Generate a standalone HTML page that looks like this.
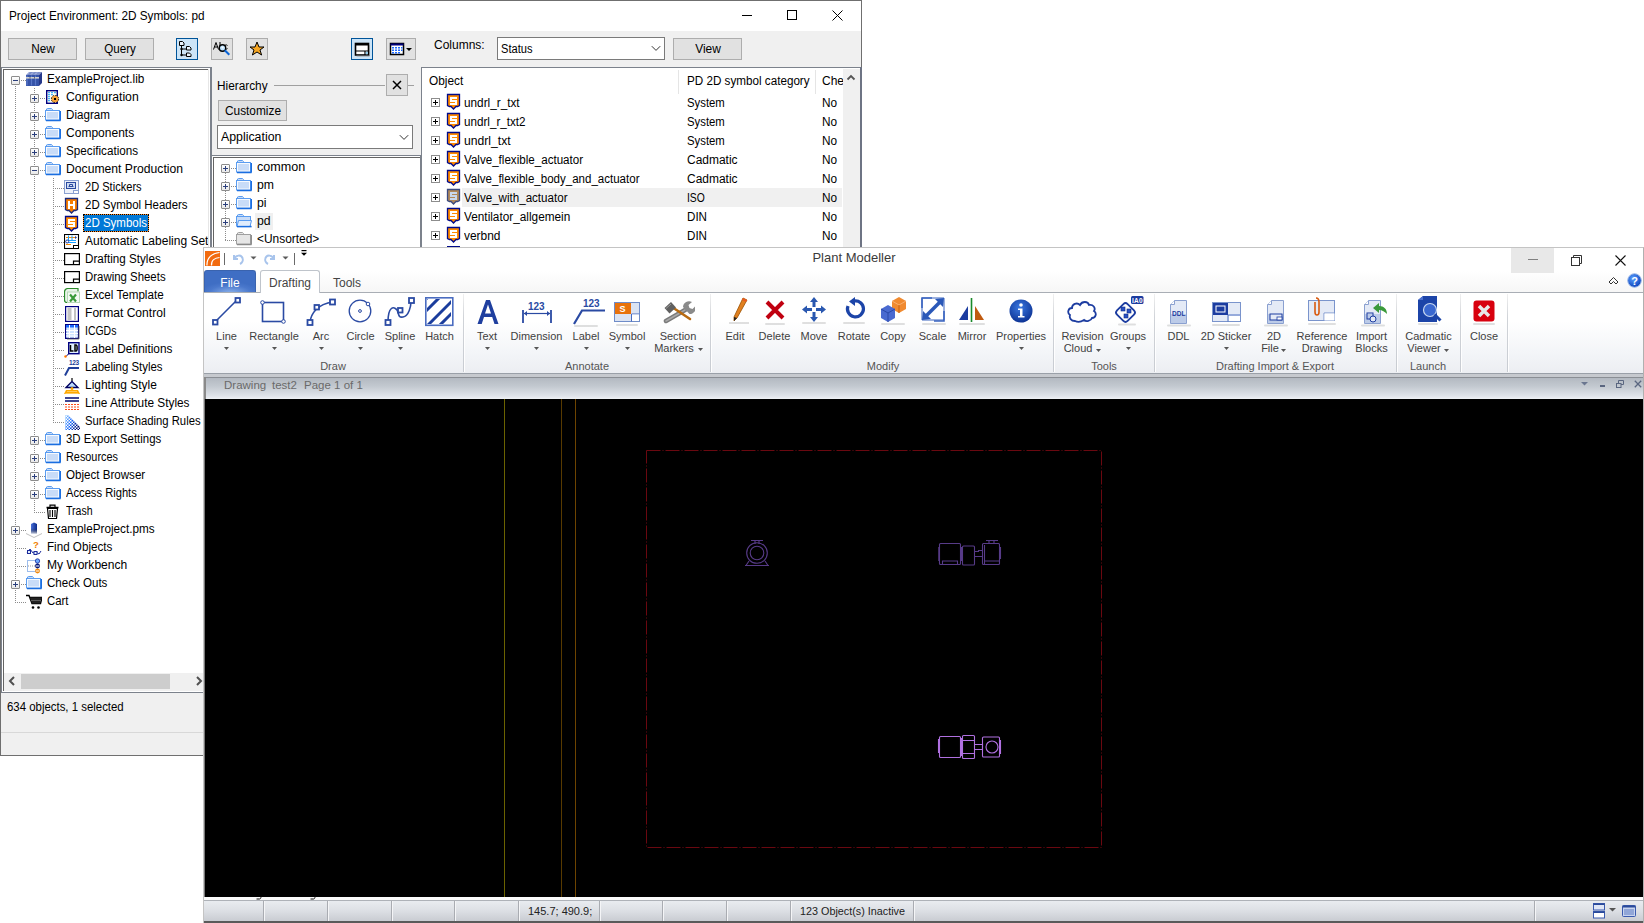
<!DOCTYPE html><html><head><meta charset="utf-8"><style>
html,body{margin:0;padding:0;width:1644px;height:923px;overflow:hidden;background:#fff;font-family:"Liberation Sans", sans-serif;}
.b{position:absolute;box-sizing:border-box;}
.t{position:absolute;white-space:pre;}
</style></head><body>
<div class="b" style="left:0px;top:0px;width:862px;height:756px;background:#f0f0f0;border:1px solid #6f6f6f;"></div>
<div class="b" style="left:1px;top:1px;width:860px;height:30px;background:#fff;"></div>
<div class="t" style="left:9px;top:10px;font-size:12px;line-height:12px;color:#000;transform:scaleX(0.9803);transform-origin:0 0;">Project Environment: 2D Symbols: pd</div>
<div class="b" style="left:742px;top:15px;width:10px;height:1px;background:#000;"></div>
<div class="b" style="left:787px;top:10px;width:10px;height:10px;border:1px solid #000;"></div>
<svg class="b" style="left:832px;top:10px;" width="11" height="11" viewBox="0 0 11 11"><path d="M0.5 0.5L10.5 10.5M10.5 0.5L0.5 10.5" stroke="#000" stroke-width="1"/></svg>
<div class="b" style="left:8px;top:38px;width:69px;height:22px;background:#e1e1e1;border:1px solid #adadad;"></div>
<div class="t" style="left:-107.5px;width:300px;text-align:center;top:43px;font-size:12px;line-height:12px;color:#000;transform:scaleX(0.9831);">New</div>
<div class="b" style="left:85px;top:38px;width:69px;height:22px;background:#e1e1e1;border:1px solid #adadad;"></div>
<div class="t" style="left:-30.5px;width:300px;text-align:center;top:43px;font-size:12px;line-height:12px;color:#000;transform:scaleX(0.9670);">Query</div>
<div class="b" style="left:176px;top:38px;width:22px;height:22px;background:#cce4f7;border:1px solid #005499;"></div>
<div class="b" style="left:211px;top:38px;width:22px;height:22px;background:#e1e1e1;border:1px solid #adadad;"></div>
<div class="b" style="left:246px;top:38px;width:22px;height:22px;background:#e1e1e1;border:1px solid #adadad;"></div>
<div class="b" style="left:351px;top:38px;width:22px;height:22px;background:#cce4f7;border:1px solid #005499;"></div>
<div class="b" style="left:386px;top:38px;width:30px;height:22px;background:#e1e1e1;border:1px solid #adadad;"></div>
<svg class="b" style="left:176px;top:38px;" width="22" height="22" viewBox="0 0 22 22"><g fill="#e8f2fc" stroke="#000" stroke-width="1"><path d="M3.5 3.5h3l1.5 1.5v2.5h-4.5z"/><path d="M10.5 8.5h3l1.5 1.5v2h-4.5z"/><path d="M10.5 15h3l1.5 1.5v2h-4.5z"/></g><path d="M5.5 7.5v10M5.5 11h5M5.5 17h5" stroke="#000" fill="none"/><circle cx="5.5" cy="11" r="1.2" fill="#000"/><circle cx="5.5" cy="17" r="1.2" fill="#000"/></svg>
<svg class="b" style="left:213px;top:41px;" width="18" height="17" viewBox="0 0 18 17"><path d="M0.5 8.5L3 1.5 5.5 8.5M1.5 6h3M7 1v7.5h1.5c1.5 0 1.5-3 0-3H7" fill="none" stroke="#000" stroke-width="1"/><path d="M14.5 4.5c-1-1-3-1-3 1.5s2 2.5 3 1.5" fill="none" stroke="#000"/><circle cx="9.5" cy="7" r="3.2" fill="#bfe4ff" stroke="#000" stroke-width="1.4"/><path d="M11.8 9.3l4.5 4.5" stroke="#0a64d6" stroke-width="2"/><circle cx="9.5" cy="6.5" r="1" fill="#fff"/></svg>
<svg class="b" style="left:249px;top:41px;" width="16" height="16" viewBox="0 0 16 16"><path d="M8 1l2 5h5l-4 3 1.6 5L8 11l-4.6 3L5 9 1 6h5z" fill="#f6a623" stroke="#000" stroke-width="1"/></svg>
<svg class="b" style="left:354px;top:41px;" width="17" height="16" viewBox="0 0 17 16"><rect x="1.5" y="2.5" width="13" height="11.5" fill="#fff" stroke="#000" stroke-width="1.6"/><rect x="1" y="2" width="14" height="2.5" fill="#000"/><path d="M1.5 10h13M11 10v4" stroke="#000" stroke-width="1.2"/><rect x="11.8" y="10.8" width="2" height="2.4" fill="#8ccdf0"/><path d="M15.5 4v11h-13" stroke="#888" stroke-width="0.8" fill="none"/></svg>
<svg class="b" style="left:389px;top:41px;" width="26" height="16" viewBox="0 0 26 16"><rect x="1.5" y="2.5" width="13" height="11" fill="#fff" stroke="#000" stroke-width="1.5"/><rect x="1.5" y="2.5" width="13" height="2" fill="#00007a"/><g fill="#1e6bff"><rect x="3" y="6" width="2" height="1.5"/><rect x="6" y="6" width="2" height="1.5"/><rect x="9" y="6" width="2" height="1.5"/><rect x="12" y="6" width="1.5" height="1.5"/><rect x="3" y="8.5" width="2" height="1.5"/><rect x="6" y="8.5" width="2" height="1.5"/><rect x="9" y="8.5" width="2" height="1.5"/><rect x="12" y="8.5" width="1.5" height="1.5"/><rect x="3" y="11" width="2" height="1.5"/><rect x="6" y="11" width="2" height="1.5"/><rect x="9" y="11" width="2" height="1.5"/></g><path d="M17 7h6l-3 3z" fill="#000"/></svg>
<div class="t" style="left:434px;top:39px;font-size:12px;line-height:12px;color:#000;transform:scaleX(1.0003);transform-origin:0 0;">Columns:</div>
<div class="b" style="left:497px;top:37px;width:168px;height:23px;background:#fff;border:1px solid #7a7a7a;"></div>
<div class="t" style="left:501px;top:43px;font-size:12px;line-height:12px;color:#000;transform:scaleX(0.9259);transform-origin:0 0;">Status</div>
<svg class="b" style="left:651px;top:45px;" width="10" height="7" viewBox="0 0 10 7"><path d="M0.8 1.2l4.2 4.2 4.2-4.2" fill="none" stroke="#333" stroke-width="1"/></svg>
<div class="b" style="left:673px;top:38px;width:69px;height:22px;background:#e1e1e1;border:1px solid #adadad;"></div>
<div class="t" style="left:557.5px;width:300px;text-align:center;top:43px;font-size:12px;line-height:12px;color:#000;transform:scaleX(0.9963);">View</div>
<div class="b" style="left:1px;top:67px;width:211px;height:626px;background:#fff;border:1px solid #7c828c;border-right-width:2px;"></div>
<div class="b" style="left:3px;top:69px;width:206px;height:1px;background:#646464;"></div>
<div class="b" style="left:3px;top:69px;width:1px;height:622px;background:#646464;"></div>
<div class="b" style="left:208px;top:69px;width:1px;height:622px;background:#e6e6e6;"></div>
<div class="b" style="left:15px;top:86px;width:1px;height:515px;background:repeating-linear-gradient(180deg,#8c8c8c 0 1px,transparent 1px 2px);"></div>
<div class="b" style="left:34px;top:88px;width:1px;height:423px;background:repeating-linear-gradient(180deg,#8c8c8c 0 1px,transparent 1px 2px);"></div>
<div class="b" style="left:53px;top:178px;width:1px;height:243px;background:repeating-linear-gradient(180deg,#8c8c8c 0 1px,transparent 1px 2px);"></div>
<div class="b" style="left:21px;top:80px;width:5px;height:1px;background:repeating-linear-gradient(90deg,#8c8c8c 0 1px,transparent 1px 2px);"></div>
<div class="b" style="left:11px;top:76px;width:9px;height:9px;background:linear-gradient(#fff,#e8e8e8);border:1px solid #8d8d8d;border-radius:1px;"></div>
<div class="b" style="left:13px;top:80px;width:5px;height:1px;background:#2b3f7c;"></div>
<svg class="b" style="left:26px;top:71px;" width="16" height="17" viewBox="0 0 16 17"><path d="M0 4l3-3h13l-3 3z" fill="#7d8fc8"/><path d="M13 4l3-3v11l-3 3z" fill="#26398a"/><rect x="0" y="4" width="13" height="11" fill="#3553a8"/><path d="M1 4.5v10M5.5 4.5v10M9.5 4.5v10" stroke="#5a78c8" stroke-width="1.2"/><rect x="0" y="6" width="13" height="1.6" fill="#d0d0d0"/><path d="M4 6v1.6M8.5 6v1.6" stroke="#555" stroke-width="0.8"/><path d="M3 1.5l-2 2M7 1.5l-2 2M11 1.5l-2 2" stroke="#c8d0f0" stroke-width="0.8"/></svg>
<div class="t" style="left:47px;top:73px;font-size:12px;line-height:12px;color:#000;transform:scaleX(0.9791);transform-origin:0 0;">ExampleProject.lib</div>
<div class="b" style="left:40px;top:98px;width:5px;height:1px;background:repeating-linear-gradient(90deg,#8c8c8c 0 1px,transparent 1px 2px);"></div>
<div class="b" style="left:30px;top:94px;width:9px;height:9px;background:linear-gradient(#fff,#e8e8e8);border:1px solid #8d8d8d;border-radius:1px;"></div>
<div class="b" style="left:32px;top:98px;width:5px;height:1px;background:#2b3f7c;"></div>
<div class="b" style="left:34px;top:96px;width:1px;height:5px;background:#2b3f7c;"></div>
<svg class="b" style="left:45px;top:90px;" width="16" height="17" viewBox="0 0 16 17"><rect x="1.7" y="0.7" width="10.6" height="12.6" fill="#fffdf5" stroke="#000080" stroke-width="1.4"/><g fill="#1aa3ff"><rect x="3" y="2.2" width="2" height="1"/><rect x="6" y="2.2" width="2" height="1"/><rect x="9" y="2.2" width="2" height="1"/><rect x="3" y="4.2" width="2" height="1"/><rect x="6" y="4.2" width="2" height="1"/><rect x="3" y="6.2" width="2" height="1"/><rect x="3" y="8.2" width="2" height="1"/><rect x="3" y="10.2" width="2" height="1"/></g><circle cx="10" cy="9" r="3.6" fill="#f7a23b" stroke="#000" stroke-width="0.9" stroke-dasharray="1.6 1.2"/><circle cx="10" cy="9" r="3" fill="#f7a23b"/><rect x="9" y="8" width="2" height="2" fill="#000"/></svg>
<div class="t" style="left:66px;top:91px;font-size:12px;line-height:12px;color:#000;transform:scaleX(1.0185);transform-origin:0 0;">Configuration</div>
<div class="b" style="left:40px;top:116px;width:5px;height:1px;background:repeating-linear-gradient(90deg,#8c8c8c 0 1px,transparent 1px 2px);"></div>
<div class="b" style="left:30px;top:112px;width:9px;height:9px;background:linear-gradient(#fff,#e8e8e8);border:1px solid #8d8d8d;border-radius:1px;"></div>
<div class="b" style="left:32px;top:116px;width:5px;height:1px;background:#2b3f7c;"></div>
<div class="b" style="left:34px;top:114px;width:1px;height:5px;background:#2b3f7c;"></div>
<svg class="b" style="left:45px;top:108px;" width="16" height="17" viewBox="0 0 16 17"><path d="M1.5 2.5V1l1-.5h4l1 1v1" fill="#c8dcf8" stroke="#5a9cf0"/><rect x="0.5" y="2.5" width="14" height="9.5" fill="#c8dcf8" stroke="#5a9cf0"/><rect x="1.5" y="3.5" width="12" height="7.5" fill="none" stroke="#fff" stroke-opacity="0.85"/><path d="M1 12.6h14.6M15.3 3v9.6" stroke="#1a6ee0" stroke-width="1.5"/></svg>
<div class="t" style="left:66px;top:109px;font-size:12px;line-height:12px;color:#000;transform:scaleX(0.9681);transform-origin:0 0;">Diagram</div>
<div class="b" style="left:40px;top:134px;width:5px;height:1px;background:repeating-linear-gradient(90deg,#8c8c8c 0 1px,transparent 1px 2px);"></div>
<div class="b" style="left:30px;top:130px;width:9px;height:9px;background:linear-gradient(#fff,#e8e8e8);border:1px solid #8d8d8d;border-radius:1px;"></div>
<div class="b" style="left:32px;top:134px;width:5px;height:1px;background:#2b3f7c;"></div>
<div class="b" style="left:34px;top:132px;width:1px;height:5px;background:#2b3f7c;"></div>
<svg class="b" style="left:45px;top:126px;" width="16" height="17" viewBox="0 0 16 17"><path d="M1.5 2.5V1l1-.5h4l1 1v1" fill="#c8dcf8" stroke="#5a9cf0"/><rect x="0.5" y="2.5" width="14" height="9.5" fill="#c8dcf8" stroke="#5a9cf0"/><rect x="1.5" y="3.5" width="12" height="7.5" fill="none" stroke="#fff" stroke-opacity="0.85"/><path d="M1 12.6h14.6M15.3 3v9.6" stroke="#1a6ee0" stroke-width="1.5"/></svg>
<div class="t" style="left:66px;top:127px;font-size:12px;line-height:12px;color:#000;transform:scaleX(1.0023);transform-origin:0 0;">Components</div>
<div class="b" style="left:40px;top:152px;width:5px;height:1px;background:repeating-linear-gradient(90deg,#8c8c8c 0 1px,transparent 1px 2px);"></div>
<div class="b" style="left:30px;top:148px;width:9px;height:9px;background:linear-gradient(#fff,#e8e8e8);border:1px solid #8d8d8d;border-radius:1px;"></div>
<div class="b" style="left:32px;top:152px;width:5px;height:1px;background:#2b3f7c;"></div>
<div class="b" style="left:34px;top:150px;width:1px;height:5px;background:#2b3f7c;"></div>
<svg class="b" style="left:45px;top:144px;" width="16" height="17" viewBox="0 0 16 17"><path d="M1.5 2.5V1l1-.5h4l1 1v1" fill="#c8dcf8" stroke="#5a9cf0"/><rect x="0.5" y="2.5" width="14" height="9.5" fill="#c8dcf8" stroke="#5a9cf0"/><rect x="1.5" y="3.5" width="12" height="7.5" fill="none" stroke="#fff" stroke-opacity="0.85"/><path d="M1 12.6h14.6M15.3 3v9.6" stroke="#1a6ee0" stroke-width="1.5"/></svg>
<div class="t" style="left:66px;top:145px;font-size:12px;line-height:12px;color:#000;transform:scaleX(0.9738);transform-origin:0 0;">Specifications</div>
<div class="b" style="left:40px;top:170px;width:5px;height:1px;background:repeating-linear-gradient(90deg,#8c8c8c 0 1px,transparent 1px 2px);"></div>
<div class="b" style="left:30px;top:166px;width:9px;height:9px;background:linear-gradient(#fff,#e8e8e8);border:1px solid #8d8d8d;border-radius:1px;"></div>
<div class="b" style="left:32px;top:170px;width:5px;height:1px;background:#2b3f7c;"></div>
<svg class="b" style="left:45px;top:162px;" width="16" height="17" viewBox="0 0 16 17"><path d="M1.5 2.5V1l1-.5h4l1 1v1" fill="#c8dcf8" stroke="#5a9cf0"/><rect x="0.5" y="2.5" width="14" height="9.5" fill="#c8dcf8" stroke="#5a9cf0"/><rect x="1.5" y="3.5" width="12" height="7.5" fill="none" stroke="#fff" stroke-opacity="0.85"/><path d="M1 12.6h14.6M15.3 3v9.6" stroke="#1a6ee0" stroke-width="1.5"/></svg>
<div class="t" style="left:66px;top:163px;font-size:12px;line-height:12px;color:#000;transform:scaleX(1.0139);transform-origin:0 0;">Document Production</div>
<div class="b" style="left:53px;top:188px;width:11px;height:1px;background:repeating-linear-gradient(90deg,#8c8c8c 0 1px,transparent 1px 2px);"></div>
<svg class="b" style="left:64px;top:180px;" width="16" height="17" viewBox="0 0 16 17"><rect x="0.5" y="0.5" width="14" height="13" fill="#eef2fa" stroke="#8aa0d0"/><rect x="2.5" y="2.5" width="9" height="6" fill="#cfdcf2" stroke="#2a4aa0"/><path d="M4.5 6.5h5M5.5 6.5v-2h3v2" fill="none" stroke="#2a4aa0"/><rect x="9.5" y="10.5" width="5" height="3" fill="#fff" stroke="#8aa0d0"/></svg>
<div class="t" style="left:85px;top:181px;font-size:12px;line-height:12px;color:#000;transform:scaleX(0.9226);transform-origin:0 0;">2D Stickers</div>
<div class="b" style="left:53px;top:206px;width:11px;height:1px;background:repeating-linear-gradient(90deg,#8c8c8c 0 1px,transparent 1px 2px);"></div>
<svg class="b" style="left:64px;top:197px;" width="16" height="17" viewBox="0 0 16 17"><path d="M1.5 1.5H13.5V12.5L11.5 13.5H10L7.5 16L5 13.5H3.5L1.5 12.5Z" fill="#f57c00" stroke="#1b2a7a" stroke-width="1.3"/><path d="M5 4v8M10 4v8M5 8h5" stroke="#fff" stroke-width="2"/></svg>
<div class="t" style="left:85px;top:199px;font-size:12px;line-height:12px;color:#000;transform:scaleX(0.9555);transform-origin:0 0;">2D Symbol Headers</div>
<div class="b" style="left:53px;top:224px;width:11px;height:1px;background:repeating-linear-gradient(90deg,#8c8c8c 0 1px,transparent 1px 2px);"></div>
<svg class="b" style="left:64px;top:215px;" width="16" height="17" viewBox="0 0 16 17"><path d="M1.5 1.5H13.5V12.5L11.5 13.5H10L7.5 16L5 13.5H3.5L1.5 12.5Z" fill="#ff8a00" stroke="#000a8a" stroke-width="1.3"/><rect x="4" y="4" width="7" height="8" fill="#fff"/><path d="M6 6.5h5M4 9.5h5" stroke="#ff8a00" stroke-width="1.2"/></svg>
<div class="b" style="left:83px;top:214px;width:66px;height:18px;background:linear-gradient(#0078d7,#0078d7) padding-box,#ff8c28 border-box;border:1px dotted #000;"></div>
<div class="t" style="left:85px;top:217px;font-size:12px;line-height:12px;color:#fff;transform:scaleX(0.9584);transform-origin:0 0;">2D Symbols</div>
<div class="b" style="left:53px;top:242px;width:11px;height:1px;background:repeating-linear-gradient(90deg,#8c8c8c 0 1px,transparent 1px 2px);"></div>
<svg class="b" style="left:64px;top:234px;" width="16" height="17" viewBox="0 0 16 17"><rect x="0.5" y="0.5" width="14" height="14" fill="#fff" stroke="#000" stroke-width="1.1"/><path d="M2 3.5h10" stroke="#f58a00"/><path d="M11 2l2 1.5-2 1.5z" fill="#1a3aa0"/><path d="M4.5 1.5v5M8 1.5v5" stroke="#1aa0ff"/><path d="M4 6.5h8M4 8.5h8" stroke="#1aa0ff"/><circle cx="3.2" cy="7.5" r="1.5" fill="#fff" stroke="#1a3aa0"/><path d="M2 10.5h5" stroke="#f58a00"/><rect x="9.5" y="11.5" width="5" height="3" fill="#fff" stroke="#000"/></svg>
<div class="t" style="left:85px;top:235px;font-size:12px;line-height:12px;color:#000;">Automatic Labeling Set</div>
<div class="b" style="left:53px;top:260px;width:11px;height:1px;background:repeating-linear-gradient(90deg,#8c8c8c 0 1px,transparent 1px 2px);"></div>
<svg class="b" style="left:64px;top:252px;" width="16" height="17" viewBox="0 0 16 17"><rect x="0.6" y="1.6" width="14.8" height="11" fill="#fff" stroke="#000" stroke-width="1.2"/><path d="M9.5 12.6v-3.5h5.9" fill="none" stroke="#000" stroke-width="1.2"/></svg>
<div class="t" style="left:85px;top:253px;font-size:12px;line-height:12px;color:#000;transform:scaleX(0.9701);transform-origin:0 0;">Drafting Styles</div>
<div class="b" style="left:53px;top:278px;width:11px;height:1px;background:repeating-linear-gradient(90deg,#8c8c8c 0 1px,transparent 1px 2px);"></div>
<svg class="b" style="left:64px;top:270px;" width="16" height="17" viewBox="0 0 16 17"><rect x="0.6" y="1.6" width="14.8" height="11" fill="#fff" stroke="#000" stroke-width="1.2"/><path d="M9.5 12.6v-3.5h5.9" fill="none" stroke="#000" stroke-width="1.2"/></svg>
<div class="t" style="left:85px;top:271px;font-size:12px;line-height:12px;color:#000;transform:scaleX(0.9515);transform-origin:0 0;">Drawing Sheets</div>
<div class="b" style="left:53px;top:296px;width:11px;height:1px;background:repeating-linear-gradient(90deg,#8c8c8c 0 1px,transparent 1px 2px);"></div>
<svg class="b" style="left:64px;top:288px;" width="16" height="17" viewBox="0 0 16 17"><path d="M3 14.5C1.5 14.5 0.5 13.5 0.5 12V4C0.5 2 2 0.5 4 0.5h10v3" fill="#e8f4e8" stroke="#2a8a2a" stroke-width="1.2"/><rect x="3.5" y="4" width="12" height="10.5" fill="#f4faf4" stroke="#b8d8b8"/><path d="M6 6.5l6 7M12 6.5l-6 7" stroke="#3a9a3a" stroke-width="2.2"/></svg>
<div class="t" style="left:85px;top:289px;font-size:12px;line-height:12px;color:#000;transform:scaleX(0.9685);transform-origin:0 0;">Excel Template</div>
<div class="b" style="left:53px;top:314px;width:11px;height:1px;background:repeating-linear-gradient(90deg,#8c8c8c 0 1px,transparent 1px 2px);"></div>
<svg class="b" style="left:64px;top:306px;" width="16" height="17" viewBox="0 0 16 17"><rect x="1.6" y="0.6" width="12.8" height="14.8" fill="#fff" stroke="#000080" stroke-width="1.2"/><g fill="#888"><rect x="3.5" y="2.5" width="4" height="1"/><rect x="10" y="2.5" width="2" height="1"/><rect x="3.5" y="4.5" width="4" height="1"/><rect x="10" y="4.5" width="2" height="1"/><rect x="3.5" y="6.5" width="4" height="1"/><rect x="10" y="6.5" width="2" height="1"/><rect x="3.5" y="8.5" width="4" height="1"/><rect x="10" y="8.5" width="2" height="1"/><rect x="3.5" y="10.5" width="4" height="1"/><rect x="10" y="10.5" width="2" height="1"/><rect x="3.5" y="12.5" width="4" height="1"/><rect x="10" y="12.5" width="2" height="1"/></g></svg>
<div class="t" style="left:85px;top:307px;font-size:12px;line-height:12px;color:#000;transform:scaleX(1.0072);transform-origin:0 0;">Format Control</div>
<div class="b" style="left:53px;top:332px;width:11px;height:1px;background:repeating-linear-gradient(90deg,#8c8c8c 0 1px,transparent 1px 2px);"></div>
<svg class="b" style="left:64px;top:324px;" width="16" height="17" viewBox="0 0 16 17"><rect x="1.6" y="0.6" width="12.8" height="13.8" fill="#cfe4ff" stroke="#000080" stroke-width="1.2"/><rect x="2" y="1" width="12" height="2.5" fill="#1a6aff"/><path d="M2 6.5h12M2 9.5h12M2 12h12M5.5 1v13M10.5 1v13" stroke="#fff" stroke-width="1"/><path d="M15 2v13H3" fill="none" stroke="#555" stroke-width="0.8"/></svg>
<div class="t" style="left:85px;top:325px;font-size:12px;line-height:12px;color:#000;transform:scaleX(0.8722);transform-origin:0 0;">ICGDs</div>
<div class="b" style="left:53px;top:350px;width:11px;height:1px;background:repeating-linear-gradient(90deg,#8c8c8c 0 1px,transparent 1px 2px);"></div>
<svg class="b" style="left:64px;top:342px;" width="16" height="17" viewBox="0 0 16 17"><rect x="4.7" y="0.7" width="10.3" height="11" fill="#e0f0ff" stroke="#000080" stroke-width="1.4"/><path d="M6.5 3v6h3M11 3v6h1c1.5 0 1.5-6 0-6z" fill="none" stroke="#000" stroke-width="1.5"/><path d="M4.7 11.7L2 14.5" stroke="#000080"/><circle cx="1.5" cy="14.5" r="1.2" fill="#ff7a00"/></svg>
<div class="t" style="left:85px;top:343px;font-size:12px;line-height:12px;color:#000;transform:scaleX(0.9851);transform-origin:0 0;">Label Definitions</div>
<div class="b" style="left:53px;top:368px;width:11px;height:1px;background:repeating-linear-gradient(90deg,#8c8c8c 0 1px,transparent 1px 2px);"></div>
<svg class="b" style="left:64px;top:360px;" width="16" height="17" viewBox="0 0 16 17"><text x="5" y="5.3" font-size="6.5" font-weight="bold" font-family="Liberation Sans" fill="#1f3f9a" textLength="10">123</text><path d="M1 15.5l4-7.5h10" fill="none" stroke="#1f3f9a" stroke-width="2"/></svg>
<div class="t" style="left:85px;top:361px;font-size:12px;line-height:12px;color:#000;transform:scaleX(0.9534);transform-origin:0 0;">Labeling Styles</div>
<div class="b" style="left:53px;top:386px;width:11px;height:1px;background:repeating-linear-gradient(90deg,#8c8c8c 0 1px,transparent 1px 2px);"></div>
<svg class="b" style="left:64px;top:378px;" width="16" height="17" viewBox="0 0 16 17"><path d="M8 0v3" stroke="#000" stroke-width="1.2"/><path d="M2 9.5L8 3.5l6 6z" fill="#bcdcff" stroke="#000060" stroke-width="1.3"/><path d="M0 16l2-4h12l2 4z" fill="#ffa800"/><path d="M3 13.5h10M1.5 15.5h13" stroke="#ffd070" stroke-width="0.8"/><circle cx="8" cy="10.5" r="1.5" fill="#ffa800"/></svg>
<div class="t" style="left:85px;top:379px;font-size:12px;line-height:12px;color:#000;transform:scaleX(0.9965);transform-origin:0 0;">Lighting Style</div>
<div class="b" style="left:53px;top:404px;width:11px;height:1px;background:repeating-linear-gradient(90deg,#8c8c8c 0 1px,transparent 1px 2px);"></div>
<svg class="b" style="left:64px;top:396px;" width="16" height="17" viewBox="0 0 16 17"><path d="M1 2h14M1 5h14" stroke="#000a70" stroke-width="1.6"/><path d="M1 8.5h14M1 11h14M1 13.5h14" stroke="#ff4a1a" stroke-width="1.1" stroke-dasharray="2 1"/></svg>
<div class="t" style="left:85px;top:397px;font-size:12px;line-height:12px;color:#000;transform:scaleX(0.9853);transform-origin:0 0;">Line Attribute Styles</div>
<div class="b" style="left:53px;top:422px;width:11px;height:1px;background:repeating-linear-gradient(90deg,#8c8c8c 0 1px,transparent 1px 2px);"></div>
<svg class="b" style="left:64px;top:414px;" width="16" height="17" viewBox="0 0 16 17"><defs><linearGradient id="shg" x1="0" y1="0" x2="1" y2="0.4"><stop offset="0" stop-color="#9ad0ff"/><stop offset="0.5" stop-color="#1a6aff"/><stop offset="1" stop-color="#000a70"/></linearGradient><pattern id="chk" width="3" height="3" patternUnits="userSpaceOnUse"><rect width="1.5" height="1.5" fill="#fff"/><rect x="1.5" y="1.5" width="1.5" height="1.5" fill="#fff"/></pattern></defs><path d="M1 1h3l12 12v3H1z" fill="url(#shg)"/><path d="M1 1h3l12 12v3H1z" fill="url(#chk)"/></svg>
<div class="t" style="left:85px;top:415px;font-size:12px;line-height:12px;color:#000;transform:scaleX(0.9418);transform-origin:0 0;">Surface Shading Rules</div>
<div class="b" style="left:40px;top:440px;width:5px;height:1px;background:repeating-linear-gradient(90deg,#8c8c8c 0 1px,transparent 1px 2px);"></div>
<div class="b" style="left:30px;top:436px;width:9px;height:9px;background:linear-gradient(#fff,#e8e8e8);border:1px solid #8d8d8d;border-radius:1px;"></div>
<div class="b" style="left:32px;top:440px;width:5px;height:1px;background:#2b3f7c;"></div>
<div class="b" style="left:34px;top:438px;width:1px;height:5px;background:#2b3f7c;"></div>
<svg class="b" style="left:45px;top:432px;" width="16" height="17" viewBox="0 0 16 17"><path d="M1.5 2.5V1l1-.5h4l1 1v1" fill="#c8dcf8" stroke="#5a9cf0"/><rect x="0.5" y="2.5" width="14" height="9.5" fill="#c8dcf8" stroke="#5a9cf0"/><rect x="1.5" y="3.5" width="12" height="7.5" fill="none" stroke="#fff" stroke-opacity="0.85"/><path d="M1 12.6h14.6M15.3 3v9.6" stroke="#1a6ee0" stroke-width="1.5"/></svg>
<div class="t" style="left:66px;top:433px;font-size:12px;line-height:12px;color:#000;transform:scaleX(0.9515);transform-origin:0 0;">3D Export Settings</div>
<div class="b" style="left:40px;top:458px;width:5px;height:1px;background:repeating-linear-gradient(90deg,#8c8c8c 0 1px,transparent 1px 2px);"></div>
<div class="b" style="left:30px;top:454px;width:9px;height:9px;background:linear-gradient(#fff,#e8e8e8);border:1px solid #8d8d8d;border-radius:1px;"></div>
<div class="b" style="left:32px;top:458px;width:5px;height:1px;background:#2b3f7c;"></div>
<div class="b" style="left:34px;top:456px;width:1px;height:5px;background:#2b3f7c;"></div>
<svg class="b" style="left:45px;top:450px;" width="16" height="17" viewBox="0 0 16 17"><path d="M1.5 2.5V1l1-.5h4l1 1v1" fill="#c8dcf8" stroke="#5a9cf0"/><rect x="0.5" y="2.5" width="14" height="9.5" fill="#c8dcf8" stroke="#5a9cf0"/><rect x="1.5" y="3.5" width="12" height="7.5" fill="none" stroke="#fff" stroke-opacity="0.85"/><path d="M1 12.6h14.6M15.3 3v9.6" stroke="#1a6ee0" stroke-width="1.5"/></svg>
<div class="t" style="left:66px;top:451px;font-size:12px;line-height:12px;color:#000;transform:scaleX(0.9048);transform-origin:0 0;">Resources</div>
<div class="b" style="left:40px;top:476px;width:5px;height:1px;background:repeating-linear-gradient(90deg,#8c8c8c 0 1px,transparent 1px 2px);"></div>
<div class="b" style="left:30px;top:472px;width:9px;height:9px;background:linear-gradient(#fff,#e8e8e8);border:1px solid #8d8d8d;border-radius:1px;"></div>
<div class="b" style="left:32px;top:476px;width:5px;height:1px;background:#2b3f7c;"></div>
<div class="b" style="left:34px;top:474px;width:1px;height:5px;background:#2b3f7c;"></div>
<svg class="b" style="left:45px;top:468px;" width="16" height="17" viewBox="0 0 16 17"><path d="M1.5 2.5V1l1-.5h4l1 1v1" fill="#c8dcf8" stroke="#5a9cf0"/><rect x="0.5" y="2.5" width="14" height="9.5" fill="#c8dcf8" stroke="#5a9cf0"/><rect x="1.5" y="3.5" width="12" height="7.5" fill="none" stroke="#fff" stroke-opacity="0.85"/><path d="M1 12.6h14.6M15.3 3v9.6" stroke="#1a6ee0" stroke-width="1.5"/></svg>
<div class="t" style="left:66px;top:469px;font-size:12px;line-height:12px;color:#000;transform:scaleX(0.9655);transform-origin:0 0;">Object Browser</div>
<div class="b" style="left:40px;top:494px;width:5px;height:1px;background:repeating-linear-gradient(90deg,#8c8c8c 0 1px,transparent 1px 2px);"></div>
<div class="b" style="left:30px;top:490px;width:9px;height:9px;background:linear-gradient(#fff,#e8e8e8);border:1px solid #8d8d8d;border-radius:1px;"></div>
<div class="b" style="left:32px;top:494px;width:5px;height:1px;background:#2b3f7c;"></div>
<div class="b" style="left:34px;top:492px;width:1px;height:5px;background:#2b3f7c;"></div>
<svg class="b" style="left:45px;top:486px;" width="16" height="17" viewBox="0 0 16 17"><path d="M1.5 2.5V1l1-.5h4l1 1v1" fill="#c8dcf8" stroke="#5a9cf0"/><rect x="0.5" y="2.5" width="14" height="9.5" fill="#c8dcf8" stroke="#5a9cf0"/><rect x="1.5" y="3.5" width="12" height="7.5" fill="none" stroke="#fff" stroke-opacity="0.85"/><path d="M1 12.6h14.6M15.3 3v9.6" stroke="#1a6ee0" stroke-width="1.5"/></svg>
<div class="t" style="left:66px;top:487px;font-size:12px;line-height:12px;color:#000;transform:scaleX(0.9313);transform-origin:0 0;">Access Rights</div>
<div class="b" style="left:34px;top:512px;width:11px;height:1px;background:repeating-linear-gradient(90deg,#8c8c8c 0 1px,transparent 1px 2px);"></div>
<svg class="b" style="left:45px;top:504px;" width="16" height="17" viewBox="0 0 16 17"><path d="M1.5 3.5h12" stroke="#000" stroke-width="1.5"/><path d="M5 3V1.2h5V3" fill="none" stroke="#000" stroke-width="1.2"/><path d="M2.5 4.5h10l-1 10h-8z" fill="#fff" stroke="#000" stroke-width="1.2"/><path d="M5 6v7M7.5 6v7M10 6v7" stroke="#000" stroke-width="1.1"/></svg>
<div class="t" style="left:66px;top:505px;font-size:12px;line-height:12px;color:#000;transform:scaleX(0.8766);transform-origin:0 0;">Trash</div>
<div class="b" style="left:21px;top:530px;width:5px;height:1px;background:repeating-linear-gradient(90deg,#8c8c8c 0 1px,transparent 1px 2px);"></div>
<div class="b" style="left:11px;top:526px;width:9px;height:9px;background:linear-gradient(#fff,#e8e8e8);border:1px solid #8d8d8d;border-radius:1px;"></div>
<div class="b" style="left:13px;top:530px;width:5px;height:1px;background:#2b3f7c;"></div>
<div class="b" style="left:15px;top:528px;width:1px;height:5px;background:#2b3f7c;"></div>
<svg class="b" style="left:26px;top:522px;" width="16" height="17" viewBox="0 0 16 17"><defs><linearGradient id="pg" x1="0" y1="0" x2="1" y2="0"><stop offset="0" stop-color="#4a70d8"/><stop offset="1" stop-color="#0a2a8a"/></linearGradient><linearGradient id="pg2" x1="0" y1="0" x2="0" y2="1"><stop offset="0.5" stop-color="#000" stop-opacity="0"/><stop offset="1" stop-color="#fff" stop-opacity="0.9"/></linearGradient></defs><path d="M5 2l3-1.5 3 1.5v10H5z" fill="url(#pg)"/><path d="M5 2l3-1.5 3 1.5v10H5z" fill="url(#pg2)"/><path d="M0 11.5l8 4 8-4" fill="none" stroke="#c0c0c0"/></svg>
<div class="t" style="left:47px;top:523px;font-size:12px;line-height:12px;color:#000;transform:scaleX(0.9778);transform-origin:0 0;">ExampleProject.pms</div>
<div class="b" style="left:15px;top:548px;width:11px;height:1px;background:repeating-linear-gradient(90deg,#8c8c8c 0 1px,transparent 1px 2px);"></div>
<svg class="b" style="left:26px;top:540px;" width="16" height="17" viewBox="0 0 16 17"><text x="7" y="8" font-size="9.5" font-weight="bold" font-family="Liberation Sans" fill="#f08000">?</text><path d="M1 13l3-4 3 4 3-1 3 2 2-3" fill="none" stroke="#1a2a9a" stroke-width="1"/><rect x="1.5" y="10.5" width="3" height="3" fill="#e0ecff" stroke="#1a2a9a"/><rect x="8" y="11.5" width="3" height="3" fill="#e0ecff" stroke="#1a2a9a"/></svg>
<div class="t" style="left:47px;top:541px;font-size:12px;line-height:12px;color:#000;transform:scaleX(0.9694);transform-origin:0 0;">Find Objects</div>
<div class="b" style="left:15px;top:566px;width:11px;height:1px;background:repeating-linear-gradient(90deg,#8c8c8c 0 1px,transparent 1px 2px);"></div>
<svg class="b" style="left:26px;top:558px;" width="16" height="17" viewBox="0 0 16 17"><rect x="1.5" y="2.5" width="10" height="11" fill="#fff" stroke="#3a7ad8" stroke-dasharray="1 1"/><path d="M2 8h9" stroke="#999" stroke-dasharray="1 1"/><circle cx="11.5" cy="3" r="2.2" fill="#6aa8ff" stroke="#1a2a9a" stroke-width="0.8"/><circle cx="11.5" cy="8" r="2.4" fill="#0a1a7a"/><circle cx="11.5" cy="13" r="2.4" fill="#f08a10"/><path d="M10 8h3M10 13h3" stroke="#fff"/></svg>
<div class="t" style="left:47px;top:559px;font-size:12px;line-height:12px;color:#000;transform:scaleX(1.0062);transform-origin:0 0;">My Workbench</div>
<div class="b" style="left:21px;top:584px;width:5px;height:1px;background:repeating-linear-gradient(90deg,#8c8c8c 0 1px,transparent 1px 2px);"></div>
<div class="b" style="left:11px;top:580px;width:9px;height:9px;background:linear-gradient(#fff,#e8e8e8);border:1px solid #8d8d8d;border-radius:1px;"></div>
<div class="b" style="left:13px;top:584px;width:5px;height:1px;background:#2b3f7c;"></div>
<div class="b" style="left:15px;top:582px;width:1px;height:5px;background:#2b3f7c;"></div>
<svg class="b" style="left:26px;top:576px;" width="16" height="17" viewBox="0 0 16 17"><path d="M1.5 2.5V1l1-.5h4l1 1v1" fill="#c8dcf8" stroke="#5a9cf0"/><rect x="0.5" y="2.5" width="14" height="9.5" fill="#c8dcf8" stroke="#5a9cf0"/><rect x="1.5" y="3.5" width="12" height="7.5" fill="none" stroke="#fff" stroke-opacity="0.85"/><path d="M1 12.6h14.6M15.3 3v9.6" stroke="#1a6ee0" stroke-width="1.5"/></svg>
<div class="t" style="left:47px;top:577px;font-size:12px;line-height:12px;color:#000;transform:scaleX(0.9635);transform-origin:0 0;">Check Outs</div>
<div class="b" style="left:15px;top:602px;width:11px;height:1px;background:repeating-linear-gradient(90deg,#8c8c8c 0 1px,transparent 1px 2px);"></div>
<svg class="b" style="left:26px;top:594px;" width="16" height="17" viewBox="0 0 16 17"><path d="M0 1.5h3l3 8h8.5l1.5-6H4" fill="none" stroke="#000" stroke-width="1.4"/><path d="M4 3.5h12l-2 6H6z" fill="#222"/><path d="M5 6.5h10" stroke="#777" stroke-width="0.7"/><circle cx="7" cy="13.5" r="1.3" fill="#000"/><circle cx="12.5" cy="13.5" r="1.3" fill="#000"/></svg>
<div class="t" style="left:47px;top:595px;font-size:12px;line-height:12px;color:#000;transform:scaleX(0.9484);transform-origin:0 0;">Cart</div>
<div class="b" style="left:209px;top:70px;width:1px;height:180px;background:#fff;"></div>
<div class="b" style="left:208px;top:70px;width:1px;height:180px;background:#e6e6e6;"></div>
<div class="b" style="left:4px;top:673px;width:204px;height:18px;background:#f0f0f0;"></div>
<div class="b" style="left:21px;top:674px;width:149px;height:15px;background:#cdcdcd;"></div>
<svg class="b" style="left:8px;top:676px;" width="8" height="10" viewBox="0 0 8 10"><path d="M6 1L2 5l4 4" fill="none" stroke="#505050" stroke-width="2"/></svg>
<svg class="b" style="left:195px;top:676px;" width="8" height="10" viewBox="0 0 8 10"><path d="M2 1l4 4-4 4" fill="none" stroke="#505050" stroke-width="2"/></svg>
<div class="t" style="left:7px;top:701px;font-size:12px;line-height:12px;color:#000;transform:scaleX(0.9507);transform-origin:0 0;">634 objects, 1 selected</div>
<div class="b" style="left:1px;top:732px;width:860px;height:1px;background:#d8d8d8;"></div>
<div class="t" style="left:217px;top:80px;font-size:12px;line-height:12px;color:#000;transform:scaleX(0.9854);transform-origin:0 0;">Hierarchy</div>
<div class="b" style="left:274px;top:85px;width:111px;height:1px;background:#a0a0a0;"></div>
<div class="b" style="left:408px;top:85px;width:6px;height:1px;background:#a0a0a0;"></div>
<div class="b" style="left:386px;top:74px;width:22px;height:22px;background:#e1e1e1;border:1px solid #adadad;"></div>
<svg class="b" style="left:392px;top:80px;" width="10" height="10" viewBox="0 0 10 10"><path d="M1 1l8 8M9 1l-8 8" stroke="#000" stroke-width="1.5"/></svg>
<div class="b" style="left:218px;top:100px;width:69px;height:21px;background:#e1e1e1;border:1px solid #adadad;"></div>
<div class="t" style="left:102.5px;width:300px;text-align:center;top:105px;font-size:12px;line-height:12px;color:#000;transform:scaleX(0.9879);">Customize</div>
<div class="b" style="left:217px;top:125px;width:196px;height:24px;background:#fff;border:1px solid #7a7a7a;"></div>
<div class="t" style="left:221px;top:131px;font-size:12px;line-height:12px;color:#000;transform:scaleX(1.0288);transform-origin:0 0;">Application</div>
<svg class="b" style="left:399px;top:134px;" width="10" height="7" viewBox="0 0 10 7"><path d="M0.8 1.2l4.2 4.2 4.2-4.2" fill="none" stroke="#333" stroke-width="1"/></svg>
<div class="b" style="left:211px;top:155px;width:210px;height:100px;background:#fff;border:1px solid #7c828c;border-bottom:none;"></div>
<div class="b" style="left:213px;top:157px;width:207px;height:1px;background:#646464;"></div>
<div class="b" style="left:213px;top:157px;width:1px;height:100px;background:#646464;"></div>
<div class="b" style="left:225px;top:173px;width:1px;height:67px;background:repeating-linear-gradient(180deg,#8c8c8c 0 1px,transparent 1px 2px);"></div>
<div class="b" style="left:231px;top:168px;width:5px;height:1px;background:repeating-linear-gradient(90deg,#8c8c8c 0 1px,transparent 1px 2px);"></div>
<div class="b" style="left:221px;top:164px;width:9px;height:9px;background:linear-gradient(#fff,#e8e8e8);border:1px solid #8d8d8d;border-radius:1px;"></div>
<div class="b" style="left:223px;top:168px;width:5px;height:1px;background:#2b3f7c;"></div>
<div class="b" style="left:225px;top:166px;width:1px;height:5px;background:#2b3f7c;"></div>
<svg class="b" style="left:236px;top:160px;" width="16" height="17" viewBox="0 0 16 17"><path d="M1.5 2.5V1l1-.5h4l1 1v1" fill="#c8dcf8" stroke="#5a9cf0"/><rect x="0.5" y="2.5" width="14" height="9.5" fill="#c8dcf8" stroke="#5a9cf0"/><rect x="1.5" y="3.5" width="12" height="7.5" fill="none" stroke="#fff" stroke-opacity="0.85"/><path d="M1 12.6h14.6M15.3 3v9.6" stroke="#1a6ee0" stroke-width="1.5"/></svg>
<div class="t" style="left:257px;top:161px;font-size:12px;line-height:12px;color:#000;transform:scaleX(1.0475);transform-origin:0 0;">common</div>
<div class="b" style="left:231px;top:186px;width:5px;height:1px;background:repeating-linear-gradient(90deg,#8c8c8c 0 1px,transparent 1px 2px);"></div>
<div class="b" style="left:221px;top:182px;width:9px;height:9px;background:linear-gradient(#fff,#e8e8e8);border:1px solid #8d8d8d;border-radius:1px;"></div>
<div class="b" style="left:223px;top:186px;width:5px;height:1px;background:#2b3f7c;"></div>
<div class="b" style="left:225px;top:184px;width:1px;height:5px;background:#2b3f7c;"></div>
<svg class="b" style="left:236px;top:178px;" width="16" height="17" viewBox="0 0 16 17"><path d="M1.5 2.5V1l1-.5h4l1 1v1" fill="#c8dcf8" stroke="#5a9cf0"/><rect x="0.5" y="2.5" width="14" height="9.5" fill="#c8dcf8" stroke="#5a9cf0"/><rect x="1.5" y="3.5" width="12" height="7.5" fill="none" stroke="#fff" stroke-opacity="0.85"/><path d="M1 12.6h14.6M15.3 3v9.6" stroke="#1a6ee0" stroke-width="1.5"/></svg>
<div class="t" style="left:257px;top:179px;font-size:12px;line-height:12px;color:#000;transform:scaleX(1.0198);transform-origin:0 0;">pm</div>
<div class="b" style="left:231px;top:204px;width:5px;height:1px;background:repeating-linear-gradient(90deg,#8c8c8c 0 1px,transparent 1px 2px);"></div>
<div class="b" style="left:221px;top:200px;width:9px;height:9px;background:linear-gradient(#fff,#e8e8e8);border:1px solid #8d8d8d;border-radius:1px;"></div>
<div class="b" style="left:223px;top:204px;width:5px;height:1px;background:#2b3f7c;"></div>
<div class="b" style="left:225px;top:202px;width:1px;height:5px;background:#2b3f7c;"></div>
<svg class="b" style="left:236px;top:196px;" width="16" height="17" viewBox="0 0 16 17"><path d="M1.5 2.5V1l1-.5h4l1 1v1" fill="#c8dcf8" stroke="#5a9cf0"/><rect x="0.5" y="2.5" width="14" height="9.5" fill="#c8dcf8" stroke="#5a9cf0"/><rect x="1.5" y="3.5" width="12" height="7.5" fill="none" stroke="#fff" stroke-opacity="0.85"/><path d="M1 12.6h14.6M15.3 3v9.6" stroke="#1a6ee0" stroke-width="1.5"/></svg>
<div class="t" style="left:257px;top:197px;font-size:12px;line-height:12px;color:#000;transform:scaleX(1.0171);transform-origin:0 0;">pi</div>
<div class="b" style="left:231px;top:222px;width:5px;height:1px;background:repeating-linear-gradient(90deg,#8c8c8c 0 1px,transparent 1px 2px);"></div>
<div class="b" style="left:221px;top:218px;width:9px;height:9px;background:linear-gradient(#fff,#e8e8e8);border:1px solid #8d8d8d;border-radius:1px;"></div>
<div class="b" style="left:223px;top:222px;width:5px;height:1px;background:#2b3f7c;"></div>
<div class="b" style="left:225px;top:220px;width:1px;height:5px;background:#2b3f7c;"></div>
<svg class="b" style="left:236px;top:214px;" width="16" height="17" viewBox="0 0 16 17"><path d="M1.5 2.5V1l1-.5h4l1 1v1" fill="#c8dcf8" stroke="#5a9cf0"/><rect x="0.5" y="2.5" width="14" height="9.5" fill="#c8dcf8" stroke="#5a9cf0"/><path d="M2.5 6.5h13l-1.5 6h-13z" fill="#e0ecfc" stroke="#5a9cf0"/><path d="M1 12.6h14.6" stroke="#1a6ee0" stroke-width="1.5"/></svg>
<div class="b" style="left:255px;top:213px;width:18px;height:17px;background:#f0f0f0;"></div>
<div class="t" style="left:257px;top:215px;font-size:12px;line-height:12px;color:#000;transform:scaleX(1.0189);transform-origin:0 0;">pd</div>
<div class="b" style="left:225px;top:240px;width:11px;height:1px;background:repeating-linear-gradient(90deg,#8c8c8c 0 1px,transparent 1px 2px);"></div>
<svg class="b" style="left:236px;top:232px;" width="16" height="17" viewBox="0 0 16 17"><path d="M1.5 2.5V1l1-.5h4l1 1v1" fill="#e6e6e6" stroke="#a0a0a0"/><rect x="0.5" y="2.5" width="14" height="9.5" fill="#e6e6e6" stroke="#a0a0a0"/><path d="M1 12.6h14.6M15.3 3v9.6" stroke="#8a8a8a" stroke-width="1.3"/></svg>
<div class="t" style="left:257px;top:233px;font-size:12px;line-height:12px;color:#000;transform:scaleX(0.9935);transform-origin:0 0;">&lt;Unsorted&gt;</div>
<div class="b" style="left:421px;top:67px;width:440px;height:190px;background:#fff;border:1px solid #7c828c;border-right:none;border-bottom:none;"></div>
<div class="t" style="left:429px;top:75px;font-size:12px;line-height:12px;color:#000;transform:scaleX(0.9861);transform-origin:0 0;">Object</div>
<div class="b" style="left:678px;top:70px;width:1px;height:24px;background:#e5e5e5;"></div>
<div class="t" style="left:687px;top:75px;font-size:12px;line-height:12px;color:#000;transform:scaleX(0.9726);transform-origin:0 0;">PD 2D symbol category</div>
<div class="b" style="left:815px;top:70px;width:1px;height:24px;background:#e5e5e5;"></div>
<div class="t" style="left:822px;top:75px;font-size:12px;line-height:12px;color:#000;">Che</div>
<div class="b" style="left:843px;top:69px;width:17px;height:190px;background:#f0f0f0;"></div>
<svg class="b" style="left:846px;top:74px;" width="10" height="7" viewBox="0 0 10 7"><path d="M1.5 5.5l3.5-3.5 3.5 3.5" fill="none" stroke="#555" stroke-width="1.8"/></svg>
<div class="b" style="left:860px;top:67px;width:2px;height:181px;background:#6e7484;"></div>
<div class="b" style="left:447px;top:246px;width:13px;height:1px;background:#000a8a;"></div>
<div class="b" style="left:431px;top:98px;width:9px;height:9px;background:#fff;border:1px solid #8d8d8d;"></div>
<div class="b" style="left:433px;top:102px;width:5px;height:1px;background:#000;"></div>
<div class="b" style="left:435px;top:100px;width:1px;height:5px;background:#000;"></div>
<svg class="b" style="left:446px;top:93px;" width="16" height="17" viewBox="0 0 16 17"><path d="M1.5 1.5H13.5V12.5L11.5 13.5H10L7.5 16L5 13.5H3.5L1.5 12.5Z" fill="#ff8a00" stroke="#000a8a" stroke-width="1.3"/><rect x="4" y="4" width="7" height="8" fill="#fff"/><path d="M6 6.5h5M4 9.5h5" stroke="#ff8a00" stroke-width="1.2"/></svg>
<div class="t" style="left:464px;top:97px;font-size:12px;line-height:12px;color:#000;transform:scaleX(0.9806);transform-origin:0 0;">undrl_r_txt</div>
<div class="t" style="left:687px;top:97px;font-size:12px;line-height:12px;color:#000;transform:scaleX(0.9448);transform-origin:0 0;">System</div>
<div class="t" style="left:822px;top:97px;font-size:12px;line-height:12px;color:#000;transform:scaleX(0.9843);transform-origin:0 0;">No</div>
<div class="b" style="left:431px;top:117px;width:9px;height:9px;background:#fff;border:1px solid #8d8d8d;"></div>
<div class="b" style="left:433px;top:121px;width:5px;height:1px;background:#000;"></div>
<div class="b" style="left:435px;top:119px;width:1px;height:5px;background:#000;"></div>
<svg class="b" style="left:446px;top:112px;" width="16" height="17" viewBox="0 0 16 17"><path d="M1.5 1.5H13.5V12.5L11.5 13.5H10L7.5 16L5 13.5H3.5L1.5 12.5Z" fill="#ff8a00" stroke="#000a8a" stroke-width="1.3"/><rect x="4" y="4" width="7" height="8" fill="#fff"/><path d="M6 6.5h5M4 9.5h5" stroke="#ff8a00" stroke-width="1.2"/></svg>
<div class="t" style="left:464px;top:116px;font-size:12px;line-height:12px;color:#000;transform:scaleX(0.9720);transform-origin:0 0;">undrl_r_txt2</div>
<div class="t" style="left:687px;top:116px;font-size:12px;line-height:12px;color:#000;transform:scaleX(0.9448);transform-origin:0 0;">System</div>
<div class="t" style="left:822px;top:116px;font-size:12px;line-height:12px;color:#000;transform:scaleX(0.9843);transform-origin:0 0;">No</div>
<div class="b" style="left:431px;top:136px;width:9px;height:9px;background:#fff;border:1px solid #8d8d8d;"></div>
<div class="b" style="left:433px;top:140px;width:5px;height:1px;background:#000;"></div>
<div class="b" style="left:435px;top:138px;width:1px;height:5px;background:#000;"></div>
<svg class="b" style="left:446px;top:131px;" width="16" height="17" viewBox="0 0 16 17"><path d="M1.5 1.5H13.5V12.5L11.5 13.5H10L7.5 16L5 13.5H3.5L1.5 12.5Z" fill="#ff8a00" stroke="#000a8a" stroke-width="1.3"/><rect x="4" y="4" width="7" height="8" fill="#fff"/><path d="M6 6.5h5M4 9.5h5" stroke="#ff8a00" stroke-width="1.2"/></svg>
<div class="t" style="left:464px;top:135px;font-size:12px;line-height:12px;color:#000;transform:scaleX(1.0125);transform-origin:0 0;">undrl_txt</div>
<div class="t" style="left:687px;top:135px;font-size:12px;line-height:12px;color:#000;transform:scaleX(0.9448);transform-origin:0 0;">System</div>
<div class="t" style="left:822px;top:135px;font-size:12px;line-height:12px;color:#000;transform:scaleX(0.9843);transform-origin:0 0;">No</div>
<div class="b" style="left:431px;top:155px;width:9px;height:9px;background:#fff;border:1px solid #8d8d8d;"></div>
<div class="b" style="left:433px;top:159px;width:5px;height:1px;background:#000;"></div>
<div class="b" style="left:435px;top:157px;width:1px;height:5px;background:#000;"></div>
<svg class="b" style="left:446px;top:150px;" width="16" height="17" viewBox="0 0 16 17"><path d="M1.5 1.5H13.5V12.5L11.5 13.5H10L7.5 16L5 13.5H3.5L1.5 12.5Z" fill="#ff8a00" stroke="#000a8a" stroke-width="1.3"/><rect x="4" y="4" width="7" height="8" fill="#fff"/><path d="M6 6.5h5M4 9.5h5" stroke="#ff8a00" stroke-width="1.2"/></svg>
<div class="t" style="left:464px;top:154px;font-size:12px;line-height:12px;color:#000;transform:scaleX(0.9668);transform-origin:0 0;">Valve_flexible_actuator</div>
<div class="t" style="left:687px;top:154px;font-size:12px;line-height:12px;color:#000;transform:scaleX(0.9983);transform-origin:0 0;">Cadmatic</div>
<div class="t" style="left:822px;top:154px;font-size:12px;line-height:12px;color:#000;transform:scaleX(0.9843);transform-origin:0 0;">No</div>
<div class="b" style="left:431px;top:174px;width:9px;height:9px;background:#fff;border:1px solid #8d8d8d;"></div>
<div class="b" style="left:433px;top:178px;width:5px;height:1px;background:#000;"></div>
<div class="b" style="left:435px;top:176px;width:1px;height:5px;background:#000;"></div>
<svg class="b" style="left:446px;top:169px;" width="16" height="17" viewBox="0 0 16 17"><path d="M1.5 1.5H13.5V12.5L11.5 13.5H10L7.5 16L5 13.5H3.5L1.5 12.5Z" fill="#ff8a00" stroke="#000a8a" stroke-width="1.3"/><rect x="4" y="4" width="7" height="8" fill="#fff"/><path d="M6 6.5h5M4 9.5h5" stroke="#ff8a00" stroke-width="1.2"/></svg>
<div class="t" style="left:464px;top:173px;font-size:12px;line-height:12px;color:#000;transform:scaleX(0.9612);transform-origin:0 0;">Valve_flexible_body_and_actuator</div>
<div class="t" style="left:687px;top:173px;font-size:12px;line-height:12px;color:#000;transform:scaleX(0.9983);transform-origin:0 0;">Cadmatic</div>
<div class="t" style="left:822px;top:173px;font-size:12px;line-height:12px;color:#000;transform:scaleX(0.9843);transform-origin:0 0;">No</div>
<div class="b" style="left:462px;top:188px;width:380px;height:19px;background:#f0f0f0;"></div>
<div class="b" style="left:431px;top:193px;width:9px;height:9px;background:#fff;border:1px solid #8d8d8d;"></div>
<div class="b" style="left:433px;top:197px;width:5px;height:1px;background:#000;"></div>
<div class="b" style="left:435px;top:195px;width:1px;height:5px;background:#000;"></div>
<svg class="b" style="left:446px;top:188px;" width="16" height="17" viewBox="0 0 16 17"><path d="M1.5 1.5H13.5V12.5L11.5 13.5H10L7.5 16L5 13.5H3.5L1.5 12.5Z" fill="#b0885a" stroke="#3a4a80" stroke-width="1.3"/><rect x="4" y="4" width="7" height="8" fill="#c8d8f0"/><path d="M6 6.5h5M4 9.5h5" stroke="#b0885a" stroke-width="1.2"/></svg>
<div class="t" style="left:464px;top:192px;font-size:12px;line-height:12px;color:#000;transform:scaleX(0.9657);transform-origin:0 0;">Valve_with_actuator</div>
<div class="t" style="left:687px;top:192px;font-size:12px;line-height:12px;color:#000;transform:scaleX(0.8611);transform-origin:0 0;">ISO</div>
<div class="t" style="left:822px;top:192px;font-size:12px;line-height:12px;color:#000;transform:scaleX(0.9843);transform-origin:0 0;">No</div>
<div class="b" style="left:431px;top:212px;width:9px;height:9px;background:#fff;border:1px solid #8d8d8d;"></div>
<div class="b" style="left:433px;top:216px;width:5px;height:1px;background:#000;"></div>
<div class="b" style="left:435px;top:214px;width:1px;height:5px;background:#000;"></div>
<svg class="b" style="left:446px;top:207px;" width="16" height="17" viewBox="0 0 16 17"><path d="M1.5 1.5H13.5V12.5L11.5 13.5H10L7.5 16L5 13.5H3.5L1.5 12.5Z" fill="#ff8a00" stroke="#000a8a" stroke-width="1.3"/><rect x="4" y="4" width="7" height="8" fill="#fff"/><path d="M6 6.5h5M4 9.5h5" stroke="#ff8a00" stroke-width="1.2"/></svg>
<div class="t" style="left:464px;top:211px;font-size:12px;line-height:12px;color:#000;transform:scaleX(0.9836);transform-origin:0 0;">Ventilator_allgemein</div>
<div class="t" style="left:687px;top:211px;font-size:12px;line-height:12px;color:#000;transform:scaleX(0.9678);transform-origin:0 0;">DIN</div>
<div class="t" style="left:822px;top:211px;font-size:12px;line-height:12px;color:#000;transform:scaleX(0.9843);transform-origin:0 0;">No</div>
<div class="b" style="left:431px;top:231px;width:9px;height:9px;background:#fff;border:1px solid #8d8d8d;"></div>
<div class="b" style="left:433px;top:235px;width:5px;height:1px;background:#000;"></div>
<div class="b" style="left:435px;top:233px;width:1px;height:5px;background:#000;"></div>
<svg class="b" style="left:446px;top:226px;" width="16" height="17" viewBox="0 0 16 17"><path d="M1.5 1.5H13.5V12.5L11.5 13.5H10L7.5 16L5 13.5H3.5L1.5 12.5Z" fill="#ff8a00" stroke="#000a8a" stroke-width="1.3"/><rect x="4" y="4" width="7" height="8" fill="#fff"/><path d="M6 6.5h5M4 9.5h5" stroke="#ff8a00" stroke-width="1.2"/></svg>
<div class="t" style="left:464px;top:230px;font-size:12px;line-height:12px;color:#000;transform:scaleX(0.9947);transform-origin:0 0;">verbnd</div>
<div class="t" style="left:687px;top:230px;font-size:12px;line-height:12px;color:#000;transform:scaleX(0.9678);transform-origin:0 0;">DIN</div>
<div class="t" style="left:822px;top:230px;font-size:12px;line-height:12px;color:#000;transform:scaleX(0.9843);transform-origin:0 0;">No</div>
<div class="b" style="left:203px;top:247px;width:1441px;height:676px;background:#fff;border:1px solid #c4c4c4;border-right:1px solid #b0b0b0;"></div>
<div class="b" style="left:204px;top:248px;width:1439px;height:45px;background:linear-gradient(#ffffff 0%,#ffffff 50%,#f6f6f6 100%);"></div>
<svg class="b" style="left:205px;top:251px;" width="15" height="15" viewBox="0 0 15 15"><rect width="15" height="15" fill="#f26b0f"/><path d="M14.5 1.5C7 2 1.5 7 2 14.5" fill="none" stroke="#fff" stroke-width="1.2"/><path d="M14.5 6.5C10 7 6 9.5 6.5 14.5" fill="none" stroke="#fff" stroke-width="1.2"/></svg>
<div class="b" style="left:224px;top:253px;width:1px;height:12px;background:#6a6a6a;"></div>
<svg class="b" style="left:231px;top:252px;" width="14" height="13" viewBox="0 0 14 13"><path d="M3 3v4h4" fill="none" stroke="#a8c4ec" stroke-width="2"/><path d="M3.5 6.5C5 3 10 2.5 11.5 6c1 2.5-0.5 5-2.5 6" fill="none" stroke="#a8c4ec" stroke-width="2"/></svg>
<svg class="b" style="left:250px;top:256px;" width="8" height="5" viewBox="0 0 8 5"><path d="M0.5 0.5h6l-3 3z" fill="#5a5a5a"/></svg>
<svg class="b" style="left:263px;top:252px;" width="14" height="13" viewBox="0 0 14 13"><path d="M11 3v4H7" fill="none" stroke="#a8c4ec" stroke-width="2"/><path d="M10.5 6.5C9 3 4 2.5 2.5 6c-1 2.5 0.5 5 2.5 6" fill="none" stroke="#a8c4ec" stroke-width="2"/></svg>
<svg class="b" style="left:282px;top:256px;" width="8" height="5" viewBox="0 0 8 5"><path d="M0.5 0.5h6l-3 3z" fill="#5a5a5a"/></svg>
<div class="b" style="left:294px;top:253px;width:1px;height:12px;background:#6a6a6a;"></div>
<svg class="b" style="left:301px;top:250px;" width="6" height="7" viewBox="0 0 6 7"><path d="M0.5 0.6h5" stroke="#000" stroke-width="1.2"/><path d="M0 2.8h6l-3 3z" fill="#000"/></svg>
<div class="t" style="left:704px;width:300px;text-align:center;top:251px;font-size:13px;line-height:13px;color:#3b3b3b;">Plant Modeller</div>
<div class="b" style="left:1511px;top:248px;width:43px;height:25px;background:#e8e8e8;"></div>
<div class="b" style="left:1528px;top:259px;width:10px;height:1px;background:#808080;"></div>
<svg class="b" style="left:1571px;top:255px;" width="12" height="11" viewBox="0 0 12 11"><rect x="0.5" y="2.5" width="8" height="8" fill="none" stroke="#333"/><path d="M2.5 2.5v-2h8v8h-2" fill="none" stroke="#333"/></svg>
<svg class="b" style="left:1615px;top:255px;" width="11" height="11" viewBox="0 0 11 11"><path d="M0.5 0.5l10 10M10.5 0.5l-10 10" stroke="#111" stroke-width="1.1"/></svg>
<svg class="b" style="left:1608px;top:276px;" width="11" height="9" viewBox="0 0 11 9"><path d="M1 6l4.5-4.5L10 6 8 8 5.5 5.5 3 8z" fill="none" stroke="#333" stroke-width="1"/></svg>
<svg class="b" style="left:1627px;top:273px;" width="15" height="15" viewBox="0 0 15 15"><defs><radialGradient id="hg" cx="0.4" cy="0.35" r="0.7"><stop offset="0" stop-color="#5aa0ff"/><stop offset="1" stop-color="#0a3fb8"/></radialGradient></defs><circle cx="7.5" cy="7.5" r="6.8" fill="url(#hg)" stroke="#9cb8e8" stroke-width="1"/><text x="4.2" y="11.8" font-size="11" font-weight="bold" font-family="Liberation Sans" fill="#fff">?</text></svg>
<div class="b" style="left:204px;top:270px;width:52px;height:23px;background:radial-gradient(ellipse 60% 50% at 50% 100%,#8ab0ea 0%,#4a78cc 70%,#3f6ec4 100%),linear-gradient(#5a88d8,#3a66bc);border:1px solid #3a63ae;border-bottom:none;border-radius:3px 3px 0 0;"></div>
<div class="t" style="left:80px;width:300px;text-align:center;top:277px;font-size:12px;line-height:12px;color:#fff;">File</div>
<div class="b" style="left:204px;top:292px;width:1439px;height:1px;background:#a9aeb5;"></div>
<div class="b" style="left:260px;top:270px;width:60px;height:23px;background:#fff;border:1px solid #bfc4cb;border-bottom:none;border-radius:3px 3px 0 0;"></div>
<div class="t" style="left:140px;width:300px;text-align:center;top:277px;font-size:12px;line-height:12px;color:#444;">Drafting</div>
<div class="t" style="left:197px;width:300px;text-align:center;top:277px;font-size:12px;line-height:12px;color:#444;">Tools</div>
<div class="b" style="left:204px;top:293px;width:1439px;height:80px;background:linear-gradient(#ffffff 0%,#ffffff 35%,#f3f5f8 75%,#eceef2 100%);"></div>
<div class="b" style="left:204px;top:373px;width:1439px;height:1px;background:#9aa0a8;"></div>
<div class="b" style="left:204px;top:374px;width:1439px;height:3px;background:#c6c9ce;"></div>
<div class="b" style="left:463px;top:294px;width:1px;height:78px;background:linear-gradient(#f0f0f0,#d0d3d8 30%,#c8ccd2 100%);"></div>
<div class="b" style="left:464px;top:294px;width:1px;height:78px;background:rgba(255,255,255,0.9);"></div>
<div class="b" style="left:710px;top:294px;width:1px;height:78px;background:linear-gradient(#f0f0f0,#d0d3d8 30%,#c8ccd2 100%);"></div>
<div class="b" style="left:711px;top:294px;width:1px;height:78px;background:rgba(255,255,255,0.9);"></div>
<div class="b" style="left:1053px;top:294px;width:1px;height:78px;background:linear-gradient(#f0f0f0,#d0d3d8 30%,#c8ccd2 100%);"></div>
<div class="b" style="left:1054px;top:294px;width:1px;height:78px;background:rgba(255,255,255,0.9);"></div>
<div class="b" style="left:1154px;top:294px;width:1px;height:78px;background:linear-gradient(#f0f0f0,#d0d3d8 30%,#c8ccd2 100%);"></div>
<div class="b" style="left:1155px;top:294px;width:1px;height:78px;background:rgba(255,255,255,0.9);"></div>
<div class="b" style="left:1396px;top:294px;width:1px;height:78px;background:linear-gradient(#f0f0f0,#d0d3d8 30%,#c8ccd2 100%);"></div>
<div class="b" style="left:1397px;top:294px;width:1px;height:78px;background:rgba(255,255,255,0.9);"></div>
<div class="b" style="left:1460px;top:294px;width:1px;height:78px;background:linear-gradient(#f0f0f0,#d0d3d8 30%,#c8ccd2 100%);"></div>
<div class="b" style="left:1461px;top:294px;width:1px;height:78px;background:rgba(255,255,255,0.9);"></div>
<div class="b" style="left:1507px;top:294px;width:1px;height:78px;background:linear-gradient(#f0f0f0,#d0d3d8 30%,#c8ccd2 100%);"></div>
<div class="b" style="left:1508px;top:294px;width:1px;height:78px;background:rgba(255,255,255,0.9);"></div>
<svg class="b" style="left:211px;top:296px;" width="32" height="32" viewBox="0 0 32 32"><path d="M4 26L26 4" stroke="#2a4aa3" stroke-width="1.6"/><rect x="2" y="24" width="4.5" height="4.5" fill="#fff" stroke="#2a4aa3" stroke-width="1.8"/><rect x="24.5" y="2" width="4.5" height="4.5" fill="#fff" stroke="#2a4aa3" stroke-width="1.8"/></svg>
<div class="t" style="left:76.5px;width:300px;text-align:center;top:331px;font-size:11px;line-height:11px;color:#3f3f3f;">Line</div>
<svg class="b" style="left:224px;top:347px;" width="5" height="4" viewBox="0 0 5 4"><path d="M0 0h5l-2.5 3z" fill="#555"/></svg>
<svg class="b" style="left:258px;top:297px;" width="30" height="30" viewBox="0 0 30 30"><rect x="4.5" y="5.5" width="21" height="19" fill="none" stroke="#2a4aa3" stroke-width="1.6"/><circle cx="4.5" cy="5.5" r="1.8" fill="#fff" stroke="#2a4aa3"/><circle cx="25.5" cy="24.5" r="1.8" fill="#fff" stroke="#2a4aa3"/></svg>
<div class="t" style="left:124px;width:300px;text-align:center;top:331px;font-size:11px;line-height:11px;color:#3f3f3f;">Rectangle</div>
<svg class="b" style="left:272px;top:347px;" width="5" height="4" viewBox="0 0 5 4"><path d="M0 0h5l-2.5 3z" fill="#555"/></svg>
<svg class="b" style="left:305px;top:296px;" width="32" height="32" viewBox="0 0 32 32"><path d="M5 26C6 18 12 8 28 6" fill="none" stroke="#2a4aa3" stroke-width="1.6"/><rect x="2.5" y="24" width="5" height="5" fill="#fff" stroke="#2a4aa3" stroke-width="1.8"/><rect x="9.5" y="9" width="4.5" height="4.5" fill="#fff" stroke="#2a4aa3" stroke-width="1.8"/><rect x="25" y="3.5" width="5" height="5" fill="#fff" stroke="#2a4aa3" stroke-width="1.8"/></svg>
<div class="t" style="left:171px;width:300px;text-align:center;top:331px;font-size:11px;line-height:11px;color:#3f3f3f;">Arc</div>
<svg class="b" style="left:319px;top:347px;" width="5" height="4" viewBox="0 0 5 4"><path d="M0 0h5l-2.5 3z" fill="#555"/></svg>
<svg class="b" style="left:346px;top:297px;" width="30" height="30" viewBox="0 0 30 30"><circle cx="14" cy="14" r="10.8" fill="none" stroke="#2a4aa3" stroke-width="1.3"/><circle cx="22" cy="7" r="1.8" fill="#fff" stroke="#2a4aa3"/><circle cx="14" cy="14" r="1.4" fill="#fff" stroke="#2a4aa3"/></svg>
<div class="t" style="left:210.5px;width:300px;text-align:center;top:331px;font-size:11px;line-height:11px;color:#3f3f3f;">Circle</div>
<svg class="b" style="left:358px;top:347px;" width="5" height="4" viewBox="0 0 5 4"><path d="M0 0h5l-2.5 3z" fill="#555"/></svg>
<svg class="b" style="left:384px;top:296px;" width="32" height="32" viewBox="0 0 32 32"><path d="M4 26C4 10 10 10 13 14C15 18 14 22 19 21C25 20 27 10 27 5" fill="none" stroke="#2a4aa3" stroke-width="1.6"/><rect x="1.5" y="24" width="5" height="5" fill="#fff" stroke="#2a4aa3" stroke-width="1.8"/><rect x="14" y="12" width="4.5" height="4.5" fill="#fff" stroke="#2a4aa3" stroke-width="1.8"/><rect x="25" y="2" width="5" height="5" fill="#fff" stroke="#2a4aa3" stroke-width="1.8"/></svg>
<div class="t" style="left:250px;width:300px;text-align:center;top:331px;font-size:11px;line-height:11px;color:#3f3f3f;">Spline</div>
<svg class="b" style="left:398px;top:347px;" width="5" height="4" viewBox="0 0 5 4"><path d="M0 0h5l-2.5 3z" fill="#555"/></svg>
<svg class="b" style="left:424px;top:296px;" width="32" height="32" viewBox="0 0 32 32"><defs><clipPath id="hc"><rect x="3" y="3" width="24" height="25"/></clipPath></defs><rect x="1.8" y="1.8" width="27" height="27.5" fill="#fff" stroke="#4a6cc0" stroke-width="1.6"/><g clip-path="url(#hc)" stroke="#1a3c9c" stroke-width="3"><path d="M-5 10L10 -5M-5 22L22 -5M3 30L30 3M15 30L30 15"/></g></svg>
<div class="t" style="left:289.5px;width:300px;text-align:center;top:331px;font-size:11px;line-height:11px;color:#3f3f3f;">Hatch</div>
<div class="t" style="left:183px;width:300px;text-align:center;top:361px;font-size:11px;line-height:11px;color:#555;">Draw</div>
<svg class="b" style="left:476px;top:298px;" width="24" height="28" viewBox="0 0 24 28"><path d="M1.5 26L10 2h4l8.5 24h-4l-2.3-7H8l-2.3 7zM9 15.5h6L12 6.5z" fill="#1f3f9f" fill-rule="evenodd"/></svg>
<div class="t" style="left:337px;width:300px;text-align:center;top:331px;font-size:11px;line-height:11px;color:#3f3f3f;">Text</div>
<svg class="b" style="left:485px;top:347px;" width="5" height="4" viewBox="0 0 5 4"><path d="M0 0h5l-2.5 3z" fill="#555"/></svg>
<svg class="b" style="left:520px;top:300px;" width="34" height="25" viewBox="0 0 34 25"><text x="8" y="10" font-size="10" font-weight="bold" font-family="Liberation Sans" fill="#2a4aa3">123</text><path d="M3 10v13M31 10v13" stroke="#2a4aa3" stroke-width="1.8"/><path d="M4 13.5h26" stroke="#2a4aa3" stroke-width="1.2"/><path d="M4 13.5l3-2.5v5zM30 13.5l-3-2.5v5z" fill="#2a4aa3"/></svg>
<div class="t" style="left:386.5px;width:300px;text-align:center;top:331px;font-size:11px;line-height:11px;color:#3f3f3f;">Dimension</div>
<svg class="b" style="left:534px;top:347px;" width="5" height="4" viewBox="0 0 5 4"><path d="M0 0h5l-2.5 3z" fill="#555"/></svg>
<svg class="b" style="left:571px;top:297px;" width="36" height="30" viewBox="0 0 36 30"><text x="12" y="9.5" font-size="10" font-weight="bold" font-family="Liberation Sans" fill="#2a4aa3">123</text><path d="M3 27L11 13.5H34" fill="none" stroke="#2a4aa3" stroke-width="2.2"/><path d="M4 29h22" stroke="#000" stroke-opacity="0.12" stroke-width="2" stroke-linecap="round"/></svg>
<div class="t" style="left:436px;width:300px;text-align:center;top:331px;font-size:11px;line-height:11px;color:#3f3f3f;">Label</div>
<svg class="b" style="left:584px;top:347px;" width="5" height="4" viewBox="0 0 5 4"><path d="M0 0h5l-2.5 3z" fill="#555"/></svg>
<svg class="b" style="left:612px;top:300px;" width="30" height="27" viewBox="0 0 30 27"><rect x="2.5" y="2.5" width="25" height="19" fill="#dbe3f2" stroke="#6f8cc8" stroke-width="1"/><rect x="3" y="3" width="16" height="11" fill="#e8720c"/><text x="7.5" y="12" font-size="9" font-weight="bold" font-family="Liberation Sans" fill="#fff">S</text><path d="M19.5 14v7.5M19.5 14H27" stroke="#4a6cc0"/><rect x="20" y="14.5" width="7" height="6.5" fill="#fff"/><path d="M5 25h20" stroke="#000" stroke-opacity="0.12" stroke-width="2" stroke-linecap="round"/></svg>
<div class="t" style="left:477px;width:300px;text-align:center;top:331px;font-size:11px;line-height:11px;color:#3f3f3f;">Symbol</div>
<svg class="b" style="left:625px;top:347px;" width="5" height="4" viewBox="0 0 5 4"><path d="M0 0h5l-2.5 3z" fill="#555"/></svg>
<svg class="b" style="left:663px;top:300px;" width="32" height="26" viewBox="0 0 32 26"><path d="M3 21L22 10" stroke="#7a7a7a" stroke-width="4.5" stroke-linecap="round"/><path d="M3 21L22 10" stroke="#a8a8a8" stroke-width="1.5" stroke-linecap="round"/><path d="M20 7a6 6 0 0 1 9-5l-3.5 3 1 3 3 1 3-3a6 6 0 0 1-6 8z" fill="#8a8a8a"/><path d="M9 7L27 19" stroke="#b86a10" stroke-width="2.6" stroke-linecap="round"/><path d="M1.5 8L8 2l5 5.5-6.5 6z" fill="#606060"/><path d="M3 8.5L8 4" stroke="#9a9a9a" stroke-width="1"/></svg>
<div class="t" style="left:528px;width:300px;text-align:center;top:331px;font-size:11px;line-height:11px;color:#3f3f3f;">Section</div>
<div class="t" style="left:524px;width:300px;text-align:center;top:343px;font-size:11px;line-height:11px;color:#3f3f3f;">Markers</div>
<svg class="b" style="left:698px;top:348px;" width="5" height="4" viewBox="0 0 5 4"><path d="M0 0h5l-2.5 3z" fill="#555"/></svg>
<div class="t" style="left:437px;width:300px;text-align:center;top:361px;font-size:11px;line-height:11px;color:#555;">Annotate</div>
<svg class="b" style="left:729px;top:296px;" width="20" height="30" viewBox="0 0 20 30"><path d="M14 2l4 2-10 18-3 3 0-4z" fill="#e08020" stroke="#9a5000" stroke-width="0.8"/><path d="M14 2l4 2-1 2-4-2z" fill="#e85a20"/><path d="M5 25l0-4 3 1z" fill="#222"/><path d="M0 27h20" stroke="#000" stroke-opacity="0.12" stroke-width="2" stroke-linecap="round"/></svg>
<div class="t" style="left:585px;width:300px;text-align:center;top:331px;font-size:11px;line-height:11px;color:#3f3f3f;">Edit</div>
<svg class="b" style="left:763px;top:298px;" width="24" height="28" viewBox="0 0 24 28"><path d="M4 4L20 20M20 4L4 20" stroke="#c00010" stroke-width="4"/><path d="M3 26h18" stroke="#000" stroke-opacity="0.12" stroke-width="2" stroke-linecap="round"/></svg>
<div class="t" style="left:624.5px;width:300px;text-align:center;top:331px;font-size:11px;line-height:11px;color:#3f3f3f;">Delete</div>
<svg class="b" style="left:801px;top:296px;" width="26" height="30" viewBox="0 0 26 30"><g fill="#2a58b0"><path d="M13 1l4 5h-2.5v5h-3V6H9z"/><path d="M13 26l4-5h-2.5v-5h-3v5H9z"/><path d="M1 13.5l5-4v2.5h5v3H6v2.5z"/><path d="M25 13.5l-5-4v2.5h-5v3h5v2.5z"/></g><path d="M2 27h22" stroke="#000" stroke-opacity="0.12" stroke-width="2" stroke-linecap="round"/></svg>
<div class="t" style="left:664px;width:300px;text-align:center;top:331px;font-size:11px;line-height:11px;color:#3f3f3f;">Move</div>
<svg class="b" style="left:842px;top:296px;" width="24" height="30" viewBox="0 0 24 30"><path d="M6 10A8 8 0 1 0 12 5" fill="none" stroke="#1c44a8" stroke-width="3.2"/><path d="M13 1v9l-6-4.5z" fill="#1c44a8"/><path d="M2 27h20" stroke="#000" stroke-opacity="0.12" stroke-width="2" stroke-linecap="round"/></svg>
<div class="t" style="left:704px;width:300px;text-align:center;top:331px;font-size:11px;line-height:11px;color:#3f3f3f;">Rotate</div>
<svg class="b" style="left:879px;top:295px;" width="30" height="32" viewBox="0 0 30 32"><path d="M13 6l7-4 7 4v8l-7 4-7-4z" fill="#f08a30"/><path d="M13 6l7 4 7-4" fill="none" stroke="#f9b070" stroke-width="1"/><path d="M20 10v8" stroke="#c86010"/><path d="M2 14l7-4 7 4v9l-7 4-7-4z" fill="#4a6ad0"/><path d="M2 14l7 4 7-4M9 18v9" fill="none" stroke="#2a48a8" stroke-width="1"/><path d="M3 29h22" stroke="#000" stroke-opacity="0.12" stroke-width="2" stroke-linecap="round"/></svg>
<div class="t" style="left:743px;width:300px;text-align:center;top:331px;font-size:11px;line-height:11px;color:#3f3f3f;">Copy</div>
<svg class="b" style="left:920px;top:296px;" width="27" height="30" viewBox="0 0 27 30"><path d="M2 12V2h10M24 15v10H14" fill="none" stroke="#3a64c0" stroke-width="1.6"/><path d="M2 2h22v22H2z" fill="none" stroke="#3a64c0" stroke-width="1" stroke-dasharray="0"/><path d="M5 21L21 5" stroke="#2a58b8" stroke-width="3.5"/><path d="M24 2l-1 9-8-8zM2 24l9-1-8-8z" fill="#2a58b8"/><path d="M3 28h22" stroke="#000" stroke-opacity="0.12" stroke-width="2" stroke-linecap="round"/></svg>
<div class="t" style="left:782.5px;width:300px;text-align:center;top:331px;font-size:11px;line-height:11px;color:#3f3f3f;">Scale</div>
<svg class="b" style="left:958px;top:296px;" width="28" height="30" viewBox="0 0 28 30"><path d="M1 24L10 10v14z" fill="#1c3ca0"/><path d="M17 10l9 14h-9z" fill="#c05a10"/><path d="M13.5 2v24" stroke="#1a8a2a" stroke-width="1.6"/><path d="M2 28h24" stroke="#000" stroke-opacity="0.12" stroke-width="2" stroke-linecap="round"/></svg>
<div class="t" style="left:822px;width:300px;text-align:center;top:331px;font-size:11px;line-height:11px;color:#3f3f3f;">Mirror</div>
<svg class="b" style="left:1008px;top:298px;" width="27" height="27" viewBox="0 0 27 27"><defs><radialGradient id="ig" cx="0.45" cy="0.35" r="0.7"><stop offset="0" stop-color="#3a78e0"/><stop offset="1" stop-color="#0a2f90"/></radialGradient></defs><circle cx="13" cy="13" r="11.5" fill="url(#ig)"/><circle cx="13" cy="7" r="1.8" fill="#fff"/><path d="M10 10.5h4.5v7.5h2v1.5h-6.5V18h2v-6h-2z" fill="#fff"/></svg>
<div class="t" style="left:871px;width:300px;text-align:center;top:331px;font-size:11px;line-height:11px;color:#3f3f3f;">Properties</div>
<svg class="b" style="left:1019px;top:347px;" width="5" height="4" viewBox="0 0 5 4"><path d="M0 0h5l-2.5 3z" fill="#555"/></svg>
<div class="t" style="left:733px;width:300px;text-align:center;top:361px;font-size:11px;line-height:11px;color:#555;">Modify</div>
<svg class="b" style="left:1067px;top:298px;" width="32" height="28" viewBox="0 0 32 28"><path d="M8 23c-4 0-6-3-5-6-3-2-2-7 2-7 0-4 5-6 8-3 2-4 8-4 9 0 4-1 7 3 5 6 3 2 2 7-2 7-1 3-6 4-8 2-3 2-7 2-9 1z" fill="#fff" stroke="#1c3ca0" stroke-width="1.8"/></svg>
<div class="t" style="left:932.5px;width:300px;text-align:center;top:331px;font-size:11px;line-height:11px;color:#3f3f3f;">Revision</div>
<div class="t" style="left:928px;width:300px;text-align:center;top:343px;font-size:11px;line-height:11px;color:#3f3f3f;">Cloud</div>
<svg class="b" style="left:1096px;top:349px;" width="5" height="4" viewBox="0 0 5 4"><path d="M0 0h5l-2.5 3z" fill="#555"/></svg>
<svg class="b" style="left:1112px;top:295px;" width="32" height="32" viewBox="0 0 32 32"><rect x="6" y="10" width="15" height="15" rx="3" transform="rotate(45 13.5 17.5)" fill="#fff" stroke="#1c3ca0" stroke-width="1.8"/><g fill="#2a50c0" stroke="#0a2a8a" stroke-width="0.6"><rect x="9" y="12" width="4" height="4"/><rect x="15" y="14" width="4" height="4"/><rect x="12" y="19" width="4" height="4"/></g><rect x="19" y="1" width="12.5" height="8" rx="1.5" fill="#1c3ca0"/><text x="20" y="7.6" font-size="6.5" font-weight="bold" font-family="Liberation Sans" fill="#fff" textLength="10.5">IA0</text><path d="M7 29.5h16" stroke="#000" stroke-opacity="0.12" stroke-width="2" stroke-linecap="round"/></svg>
<div class="t" style="left:978px;width:300px;text-align:center;top:331px;font-size:11px;line-height:11px;color:#3f3f3f;">Groups</div>
<svg class="b" style="left:1126px;top:347px;" width="5" height="4" viewBox="0 0 5 4"><path d="M0 0h5l-2.5 3z" fill="#555"/></svg>
<div class="t" style="left:954px;width:300px;text-align:center;top:361px;font-size:11px;line-height:11px;color:#555;">Tools</div>
<svg class="b" style="left:1166px;top:300px;" width="26" height="27" viewBox="0 0 26 27"><path d="M4.5 4.5l4-4h12v23h-16z" fill="#e4eaf6" stroke="#8aa0d0" stroke-width="1"/><path d="M4.5 4.5h4v-4" fill="#fff" stroke="#8aa0d0"/><path d="M5 14h15v9H5z" fill="#bccbe8"/><text x="6" y="15.5" font-size="6.5" font-weight="bold" font-family="Liberation Sans" fill="#1c3ca0">DDL</text><path d="M2 25.5h22" stroke="#000" stroke-opacity="0.12" stroke-width="2" stroke-linecap="round"/></svg>
<div class="t" style="left:1028.5px;width:300px;text-align:center;top:331px;font-size:11px;line-height:11px;color:#3f3f3f;">DDL</div>
<svg class="b" style="left:1211px;top:301px;" width="32" height="26" viewBox="0 0 32 26"><rect x="1.5" y="1.5" width="28" height="19" fill="#e4eaf6" stroke="#7a94cc"/><rect x="2" y="2" width="15" height="12" fill="#1c3ca0"/><rect x="5" y="5" width="9" height="6" fill="none" stroke="#fff"/><path d="M17 14v6.5M17 14h12" stroke="#4a6cc0"/><rect x="18" y="15" width="11" height="5" fill="#fff"/><path d="M2 24h26" stroke="#000" stroke-opacity="0.12" stroke-width="2" stroke-linecap="round"/></svg>
<div class="t" style="left:1076px;width:300px;text-align:center;top:331px;font-size:11px;line-height:11px;color:#3f3f3f;">2D Sticker</div>
<svg class="b" style="left:1224px;top:347px;" width="5" height="4" viewBox="0 0 5 4"><path d="M0 0h5l-2.5 3z" fill="#555"/></svg>
<svg class="b" style="left:1263px;top:300px;" width="26" height="27" viewBox="0 0 26 27"><path d="M4.5 4.5l4-4h12v23h-16z" fill="#e4eaf6" stroke="#8aa0d0" stroke-width="1"/><path d="M4.5 4.5h4v-4" fill="#fff" stroke="#8aa0d0"/><path d="M5 14h15v9H5z" fill="#bccbe8"/><rect x="7" y="14" width="12" height="6" fill="#e4eaf6" stroke="#1c3ca0"/><rect x="14" y="17" width="5" height="3" fill="#fff" stroke="#1c3ca0" stroke-width="0.8"/><path d="M2 25.5h22" stroke="#000" stroke-opacity="0.12" stroke-width="2" stroke-linecap="round"/></svg>
<div class="t" style="left:1124px;width:300px;text-align:center;top:331px;font-size:11px;line-height:11px;color:#3f3f3f;">2D</div>
<div class="t" style="left:1120px;width:300px;text-align:center;top:343px;font-size:11px;line-height:11px;color:#3f3f3f;">File</div>
<svg class="b" style="left:1281px;top:349px;" width="5" height="4" viewBox="0 0 5 4"><path d="M0 0h5l-2.5 3z" fill="#555"/></svg>
<svg class="b" style="left:1307px;top:297px;" width="32" height="30" viewBox="0 0 32 30"><rect x="1.5" y="3.5" width="26" height="20" fill="#e4eaf6" stroke="#7a94cc"/><path d="M17 23v-7h10.5" fill="none" stroke="#7a94cc"/><rect x="17.5" y="16.5" width="10" height="7" fill="#fff"/><path d="M9 1c3 0 3 2 3 4v10c0 2-1 3-2 3s-2-1-2-3V5" fill="none" stroke="#d85a10" stroke-width="1.6"/><path d="M2 27h26" stroke="#000" stroke-opacity="0.12" stroke-width="2" stroke-linecap="round"/></svg>
<div class="t" style="left:1172px;width:300px;text-align:center;top:331px;font-size:11px;line-height:11px;color:#3f3f3f;">Reference</div>
<div class="t" style="left:1172px;width:300px;text-align:center;top:343px;font-size:11px;line-height:11px;color:#3f3f3f;">Drawing</div>
<svg class="b" style="left:1360px;top:300px;" width="30" height="27" viewBox="0 0 30 27"><path d="M4.5 4.5l4-4h12v23h-16z" fill="#e4eaf6" stroke="#8aa0d0" stroke-width="1"/><path d="M4.5 4.5h4v-4" fill="#fff" stroke="#8aa0d0"/><path d="M5 14h15v9H5z" fill="#bccbe8"/><rect x="7" y="13" width="6" height="6" fill="none" stroke="#1c3ca0"/><circle cx="13" cy="19" r="3" fill="#e4eaf6" stroke="#1c3ca0"/><path d="M2 25.5h22" stroke="#000" stroke-opacity="0.12" stroke-width="2" stroke-linecap="round"/><path d="M27 14c0-5-3-8-8-8v-3l-6 5 6 5v-3c3 0 6 2 8 4z" fill="#3a9a3a"/></svg>
<div class="t" style="left:1221.5px;width:300px;text-align:center;top:331px;font-size:11px;line-height:11px;color:#3f3f3f;">Import</div>
<div class="t" style="left:1221.5px;width:300px;text-align:center;top:343px;font-size:11px;line-height:11px;color:#3f3f3f;">Blocks</div>
<div class="t" style="left:1125px;width:300px;text-align:center;top:361px;font-size:11px;line-height:11px;color:#555;">Drafting Import &amp; Export</div>
<svg class="b" style="left:1414px;top:295px;" width="32" height="31" viewBox="0 0 32 31"><path d="M4 5l5-4h14v26H4z" fill="#1c44a8"/><path d="M4 5h5V1" fill="#4a70d0"/><circle cx="16" cy="15" r="6.5" fill="#3a68d0" stroke="#c8d8f0" stroke-width="1.2"/><path d="M20.5 19.5l6 6" stroke="#1c44a8" stroke-width="3"/><path d="M5 29h18" stroke="#000" stroke-opacity="0.12" stroke-width="2" stroke-linecap="round"/></svg>
<div class="t" style="left:1278.5px;width:300px;text-align:center;top:331px;font-size:11px;line-height:11px;color:#3f3f3f;">Cadmatic</div>
<div class="t" style="left:1274px;width:300px;text-align:center;top:343px;font-size:11px;line-height:11px;color:#3f3f3f;">Viewer</div>
<svg class="b" style="left:1444px;top:349px;" width="5" height="4" viewBox="0 0 5 4"><path d="M0 0h5l-2.5 3z" fill="#555"/></svg>
<div class="t" style="left:1278px;width:300px;text-align:center;top:361px;font-size:11px;line-height:11px;color:#555;">Launch</div>
<svg class="b" style="left:1472px;top:299px;" width="24" height="27" viewBox="0 0 24 27"><rect x="1.5" y="1.5" width="21" height="21" rx="3" fill="#d8000e"/><path d="M7 7l10 10M17 7L7 17" stroke="#e8e8e8" stroke-width="3.5"/><path d="M2 25h20" stroke="#000" stroke-opacity="0.12" stroke-width="2" stroke-linecap="round"/></svg>
<div class="t" style="left:1334px;width:300px;text-align:center;top:331px;font-size:11px;line-height:11px;color:#3f3f3f;">Close</div>
<div class="b" style="left:204px;top:377px;width:1439px;height:1px;background:#8a8e94;"></div>
<div class="b" style="left:204px;top:378px;width:1439px;height:21px;background:linear-gradient(#b3b9c1 0%,#c3c9d0 40%,#dfe3e9 85%,#eef1f5 100%);"></div>
<div class="b" style="left:204px;top:377px;width:2px;height:22px;background:#8a8a8a;"></div>
<div class="t" style="left:224px;top:380px;font-size:11.5px;line-height:11.5px;color:#6a6a6a;">Drawing</div>
<div class="t" style="left:272px;top:380px;font-size:11.5px;line-height:11.5px;color:#6a6a6a;">test2</div>
<div class="t" style="left:304px;top:380px;font-size:11.5px;line-height:11.5px;color:#6a6a6a;">Page 1 of 1</div>
<svg class="b" style="left:1581px;top:382px;" width="7" height="4" viewBox="0 0 7 4"><path d="M0 0h7l-3.5 3.5z" fill="#6a7690"/></svg>
<div class="b" style="left:1600px;top:385px;width:5px;height:2px;background:#5a6680;"></div>
<svg class="b" style="left:1616px;top:380px;" width="8" height="8" viewBox="0 0 8 8"><rect x="0.5" y="3.5" width="4.5" height="4" fill="none" stroke="#5a6680"/><path d="M2.5 3.5v-3h5v4h-2.5" fill="none" stroke="#5a6680"/></svg>
<svg class="b" style="left:1634px;top:380px;" width="8" height="8" viewBox="0 0 8 8"><path d="M0.8 0.8l6.4 6.4M7.2 0.8l-6.4 6.4" stroke="#5a6680" stroke-width="1.3"/></svg>
<div class="b" style="left:204px;top:399px;width:1439px;height:498px;background:#000;"></div>
<div class="b" style="left:204px;top:399px;width:1px;height:498px;background:#777;"></div>
<div class="b" style="left:504px;top:399px;width:1px;height:498px;background:#6a6200;"></div>
<div class="b" style="left:561px;top:399px;width:1px;height:498px;background:#583a00;"></div>
<div class="b" style="left:575px;top:399px;width:1px;height:498px;background:#6e4400;"></div>
<svg class="b" style="left:640px;top:444px;" width="470" height="410" viewBox="0 0 470 410"><rect x="6.5" y="6.5" width="455" height="397" fill="none" stroke="#6a0810" stroke-width="1" stroke-dasharray="14 2 1 2"/></svg>
<svg class="b" style="left:740px;top:535px;" width="34" height="34" viewBox="0 0 34 34"><g fill="none" stroke="#573b88" stroke-width="1.1"><path d="M11 5.5h12M15 6v3M19 6v3"/><circle cx="17" cy="18" r="10.3"/><circle cx="17" cy="18" r="6.8"/><path d="M5 30.5h24M9 26l-3 4.5M25 26l3 4.5"/></g></svg>
<svg class="b" style="left:930px;top:530px;" width="80" height="45" viewBox="0 0 80 45"><g fill="none" stroke="#573b88" stroke-width="1.1"><rect x="9.5" y="13.5" width="21" height="21" rx="1"/><path d="M8.8 17v14M12.5 34.5v-3.5h15v3.5"/><rect x="32.5" y="16" width="12" height="19" rx="1"/><path d="M31.5 17v14"/><path d="M44.5 21.5h4v-1h4M44.5 26.5h8"/><rect x="52.5" y="13.5" width="17" height="21" rx="1"/><path d="M54.5 15v17M56 10.5h12M59 11v3M64 11v3M70.5 17v12M54.5 34.5v-3.5h15"/></g></svg>
<svg class="b" style="left:930px;top:725px;" width="80" height="45" viewBox="0 0 80 45"><g fill="none" stroke="#b070e0" stroke-width="1.1"><rect x="9.5" y="11.5" width="21" height="21" rx="1"/><path d="M8.5 14v14"/><rect x="32.5" y="10.5" width="12" height="23" rx="1"/><path d="M32.5 15.5h12M32.5 28.5h12M31.5 13v18"/><path d="M44.5 19.5h8v5h-8"/><rect x="52.5" y="12" width="17" height="20" rx="1"/><circle cx="62" cy="22" r="6"/><path d="M70.5 15v14"/></g></svg>
<div class="b" style="left:204px;top:897px;width:1439px;height:3px;background:#fbfbfb;"></div>
<div class="b" style="left:204px;top:900px;width:1439px;height:1px;background:#aeb2b8;"></div>
<div class="b" style="left:204px;top:901px;width:1439px;height:20px;background:linear-gradient(#e9ecf0 0%,#dcdfe4 50%,#c9ccd2 100%);"></div>
<svg class="b" style="left:256px;top:896px;" width="6" height="4" viewBox="0 0 6 4"><path d="M0.5 3H3.5c1 0 1.5-1 1.5-2.5" fill="none" stroke="#111" stroke-width="1"/></svg>
<svg class="b" style="left:310px;top:896px;" width="6" height="4" viewBox="0 0 6 4"><path d="M0.5 3H3.5c1 0 1.5-1 1.5-2.5" fill="none" stroke="#111" stroke-width="1"/></svg>
<div class="b" style="left:204px;top:921px;width:1439px;height:2px;background:#5a5a5a;"></div>
<div class="b" style="left:263px;top:901px;width:1px;height:20px;background:#a9acb2;"></div>
<div class="b" style="left:264px;top:901px;width:1px;height:20px;background:#f4f5f7;"></div>
<div class="b" style="left:327px;top:901px;width:1px;height:20px;background:#a9acb2;"></div>
<div class="b" style="left:328px;top:901px;width:1px;height:20px;background:#f4f5f7;"></div>
<div class="b" style="left:391px;top:901px;width:1px;height:20px;background:#a9acb2;"></div>
<div class="b" style="left:392px;top:901px;width:1px;height:20px;background:#f4f5f7;"></div>
<div class="b" style="left:454px;top:901px;width:1px;height:20px;background:#a9acb2;"></div>
<div class="b" style="left:455px;top:901px;width:1px;height:20px;background:#f4f5f7;"></div>
<div class="b" style="left:518px;top:901px;width:1px;height:20px;background:#a9acb2;"></div>
<div class="b" style="left:519px;top:901px;width:1px;height:20px;background:#f4f5f7;"></div>
<div class="b" style="left:599px;top:901px;width:1px;height:20px;background:#a9acb2;"></div>
<div class="b" style="left:600px;top:901px;width:1px;height:20px;background:#f4f5f7;"></div>
<div class="b" style="left:662px;top:901px;width:1px;height:20px;background:#a9acb2;"></div>
<div class="b" style="left:663px;top:901px;width:1px;height:20px;background:#f4f5f7;"></div>
<div class="b" style="left:726px;top:901px;width:1px;height:20px;background:#a9acb2;"></div>
<div class="b" style="left:727px;top:901px;width:1px;height:20px;background:#f4f5f7;"></div>
<div class="b" style="left:790px;top:901px;width:1px;height:20px;background:#a9acb2;"></div>
<div class="b" style="left:791px;top:901px;width:1px;height:20px;background:#f4f5f7;"></div>
<div class="b" style="left:913px;top:901px;width:1px;height:20px;background:#a9acb2;"></div>
<div class="b" style="left:914px;top:901px;width:1px;height:20px;background:#f4f5f7;"></div>
<div class="b" style="left:1534px;top:901px;width:1px;height:20px;background:#a9acb2;"></div>
<div class="b" style="left:1535px;top:901px;width:1px;height:20px;background:#f4f5f7;"></div>
<div class="t" style="left:528px;top:906px;font-size:11px;line-height:11px;color:#222;">145.7; 490.9;</div>
<div class="t" style="left:800px;top:906px;font-size:11px;line-height:11px;color:#222;transform:scaleX(0.9814);transform-origin:0 0;">123 Object(s) Inactive</div>
<svg class="b" style="left:1593px;top:903px;" width="13" height="16" viewBox="0 0 13 16"><rect x="0.5" y="0.5" width="11" height="6.5" fill="#dfe6f6" stroke="#3a5aae"/><rect x="0.5" y="0.5" width="11" height="1.5" fill="#2a4a9a"/><rect x="0.5" y="8.5" width="11" height="6.5" fill="#fff" stroke="#3a5aae"/><rect x="0.5" y="8.5" width="11" height="1.5" fill="#2a4a9a"/></svg>
<svg class="b" style="left:1609px;top:908px;" width="7" height="4" viewBox="0 0 7 4"><path d="M0 0h7l-3.5 3.5z" fill="#555"/></svg>
<svg class="b" style="left:1622px;top:905px;" width="14" height="12" viewBox="0 0 14 12"><rect x="0.5" y="0.5" width="13" height="11" rx="1" fill="#c8d4ee" stroke="#3a5aae"/><rect x="0.5" y="0.5" width="13" height="2" fill="#2a4a9a"/><path d="M2 5h10M2 7h10M2 9h10" stroke="#5a78c0"/></svg>
</body></html>
